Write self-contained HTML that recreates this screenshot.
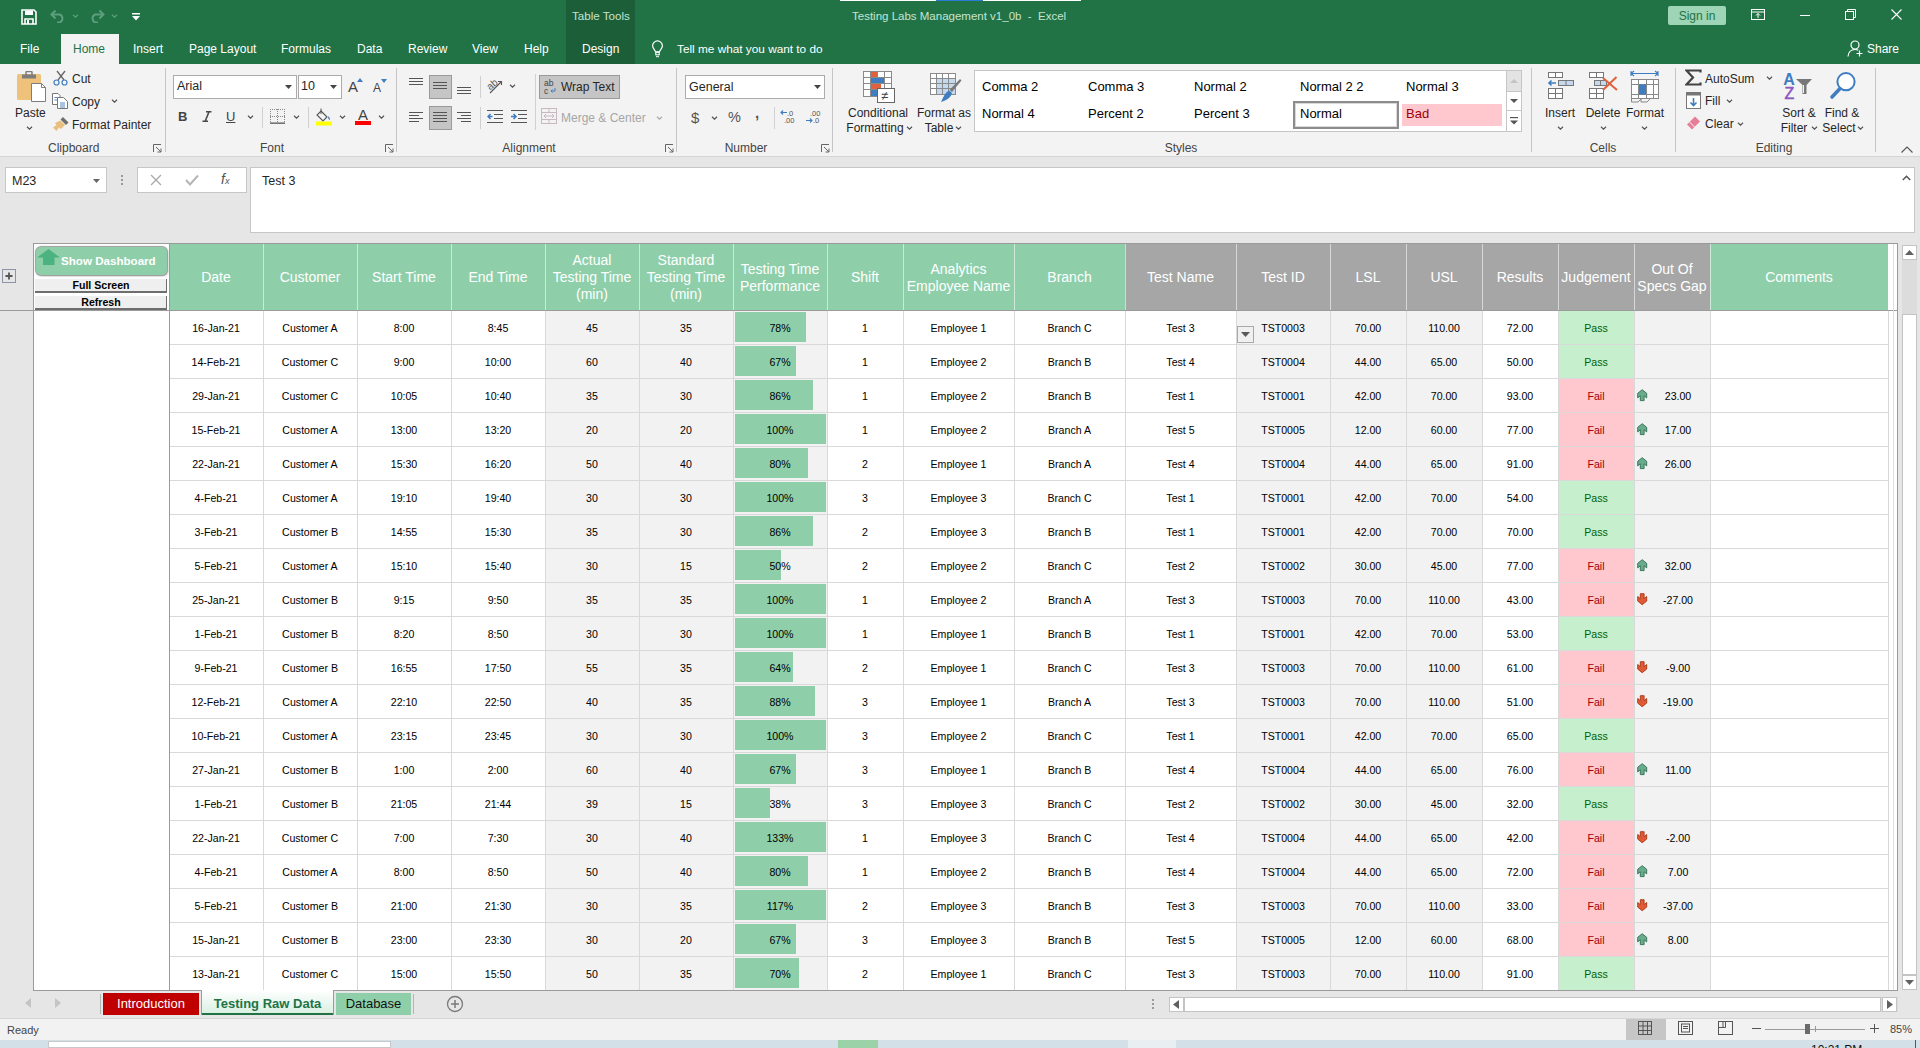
<!DOCTYPE html><html><head><meta charset="utf-8"><style>
html,body{margin:0;padding:0;width:1920px;height:1048px;overflow:hidden;background:#e6e6e6}
body{position:relative;font-family:"Liberation Sans",sans-serif}
div{position:absolute;box-sizing:border-box}
.t{white-space:nowrap}
</style></head><body>
<div style="left:0px;top:0px;width:1920px;height:64px;background:#217346"></div>
<div style="left:566px;top:0px;width:69px;height:64px;background:#1b5e38"></div>
<div style="left:840px;top:0px;width:241px;height:1px;background:#ffffff"></div>
<div style="left:936px;top:0px;width:47px;height:1px;background:#2b7bd6"></div>
<div class="t" style="left:572px;top:8.0px;height:16px;line-height:16px;font-size:11.6px;color:#c6e3d1;text-align:left;font-weight:normal;">Table Tools</div>
<div class="t" style="left:852px;top:8.0px;height:16px;line-height:16px;font-size:11.5px;color:#c6e3d1;text-align:left;font-weight:normal;">Testing Labs Management v1_0b&nbsp; -&nbsp; Excel</div>
<div style="left:61px;top:34px;width:58px;height:30px;background:#f3f3f3"></div>
<div class="t" style="left:20px;top:41.0px;height:16px;line-height:16px;font-size:12px;color:#ffffff;text-align:left;font-weight:normal;">File</div>
<div class="t" style="left:73px;top:41.0px;height:16px;line-height:16px;font-size:12px;color:#217346;text-align:left;font-weight:normal;">Home</div>
<div class="t" style="left:133px;top:41.0px;height:16px;line-height:16px;font-size:12px;color:#ffffff;text-align:left;font-weight:normal;">Insert</div>
<div class="t" style="left:189px;top:41.0px;height:16px;line-height:16px;font-size:12px;color:#ffffff;text-align:left;font-weight:normal;">Page Layout</div>
<div class="t" style="left:281px;top:41.0px;height:16px;line-height:16px;font-size:12px;color:#ffffff;text-align:left;font-weight:normal;">Formulas</div>
<div class="t" style="left:357px;top:41.0px;height:16px;line-height:16px;font-size:12px;color:#ffffff;text-align:left;font-weight:normal;">Data</div>
<div class="t" style="left:408px;top:41.0px;height:16px;line-height:16px;font-size:12px;color:#ffffff;text-align:left;font-weight:normal;">Review</div>
<div class="t" style="left:472px;top:41.0px;height:16px;line-height:16px;font-size:12px;color:#ffffff;text-align:left;font-weight:normal;">View</div>
<div class="t" style="left:524px;top:41.0px;height:16px;line-height:16px;font-size:12px;color:#ffffff;text-align:left;font-weight:normal;">Help</div>
<div class="t" style="left:582px;top:41.0px;height:16px;line-height:16px;font-size:12px;color:#ffffff;text-align:left;font-weight:normal;">Design</div>
<div class="t" style="left:677px;top:41.0px;height:16px;line-height:16px;font-size:11.8px;color:#ffffff;text-align:left;font-weight:normal;">Tell me what you want to do</div>
<div style="left:1668px;top:6px;width:58px;height:19px;background:#9fd5b7;border-radius:2px"></div>
<div class="t" style="left:1668px;top:8.0px;width:58px;height:16px;line-height:16px;font-size:12px;color:#217346;text-align:center;font-weight:normal;">Sign in</div>
<div style="left:0px;top:64px;width:1920px;height:92px;background:#f3f3f3"></div>
<div style="left:0px;top:156px;width:1920px;height:1px;background:#d5d5d5"></div>
<div style="left:0px;top:157px;width:1920px;height:86px;background:#e6e6e6"></div>
<div style="left:5px;top:167px;width:102px;height:26px;background:#fff;border:1px solid #c6c6c6;box-sizing:border-box"></div>
<div class="t" style="left:12px;top:172.5px;height:17px;line-height:17px;font-size:12.5px;color:#262626;text-align:left;font-weight:normal;">M23</div>
<div style="left:137px;top:167px;width:110px;height:26px;background:#fff;border:1px solid #c6c6c6;box-sizing:border-box"></div>
<div style="left:250px;top:167px;width:1665px;height:66px;background:#fff;border:1px solid #c6c6c6;box-sizing:border-box"></div>
<div class="t" style="left:262px;top:172.5px;height:17px;line-height:17px;font-size:12.5px;color:#262626;text-align:left;font-weight:normal;">Test 3</div>
<div style="left:33px;top:243px;width:1865px;height:748px;background:#fff"></div>
<div style="left:169px;top:244px;width:94px;height:66px;background:#8ecfaa"></div>
<div style="left:263px;top:244px;width:94px;height:66px;background:#8ecfaa"></div>
<div style="left:357px;top:244px;width:94px;height:66px;background:#8ecfaa"></div>
<div style="left:451px;top:244px;width:94px;height:66px;background:#8ecfaa"></div>
<div style="left:545px;top:244px;width:94px;height:66px;background:#8ecfaa"></div>
<div style="left:639px;top:244px;width:94px;height:66px;background:#8ecfaa"></div>
<div style="left:733px;top:244px;width:94px;height:66px;background:#8ecfaa"></div>
<div style="left:827px;top:244px;width:76px;height:66px;background:#8ecfaa"></div>
<div style="left:903px;top:244px;width:111px;height:66px;background:#8ecfaa"></div>
<div style="left:1014px;top:244px;width:111px;height:66px;background:#8ecfaa"></div>
<div style="left:1125px;top:244px;width:111px;height:66px;background:#a6a6a6"></div>
<div style="left:1236px;top:244px;width:94px;height:66px;background:#a6a6a6"></div>
<div style="left:1330px;top:244px;width:76px;height:66px;background:#a6a6a6"></div>
<div style="left:1406px;top:244px;width:76px;height:66px;background:#a6a6a6"></div>
<div style="left:1482px;top:244px;width:76px;height:66px;background:#a6a6a6"></div>
<div style="left:1558px;top:244px;width:76px;height:66px;background:#a6a6a6"></div>
<div style="left:1634px;top:244px;width:76px;height:66px;background:#a6a6a6"></div>
<div style="left:1710px;top:244px;width:178px;height:66px;background:#8ecfaa"></div>
<div style="left:263px;top:244px;width:1px;height:66px;background:rgba(255,255,255,0.55)"></div>
<div style="left:357px;top:244px;width:1px;height:66px;background:rgba(255,255,255,0.55)"></div>
<div style="left:451px;top:244px;width:1px;height:66px;background:rgba(255,255,255,0.55)"></div>
<div style="left:545px;top:244px;width:1px;height:66px;background:rgba(255,255,255,0.55)"></div>
<div style="left:639px;top:244px;width:1px;height:66px;background:rgba(255,255,255,0.55)"></div>
<div style="left:733px;top:244px;width:1px;height:66px;background:rgba(255,255,255,0.55)"></div>
<div style="left:827px;top:244px;width:1px;height:66px;background:rgba(255,255,255,0.55)"></div>
<div style="left:903px;top:244px;width:1px;height:66px;background:rgba(255,255,255,0.55)"></div>
<div style="left:1014px;top:244px;width:1px;height:66px;background:rgba(255,255,255,0.55)"></div>
<div style="left:1125px;top:244px;width:1px;height:66px;background:rgba(255,255,255,0.55)"></div>
<div style="left:1236px;top:244px;width:1px;height:66px;background:rgba(255,255,255,0.55)"></div>
<div style="left:1330px;top:244px;width:1px;height:66px;background:rgba(255,255,255,0.55)"></div>
<div style="left:1406px;top:244px;width:1px;height:66px;background:rgba(255,255,255,0.55)"></div>
<div style="left:1482px;top:244px;width:1px;height:66px;background:rgba(255,255,255,0.55)"></div>
<div style="left:1558px;top:244px;width:1px;height:66px;background:rgba(255,255,255,0.55)"></div>
<div style="left:1634px;top:244px;width:1px;height:66px;background:rgba(255,255,255,0.55)"></div>
<div style="left:1710px;top:244px;width:1px;height:66px;background:rgba(255,255,255,0.55)"></div>
<div class="t" style="left:169px;top:267.0px;width:94px;height:20px;line-height:20px;font-size:14px;color:#ffffff;text-align:center;font-weight:normal;">Date</div>
<div class="t" style="left:263px;top:267.0px;width:94px;height:20px;line-height:20px;font-size:14px;color:#ffffff;text-align:center;font-weight:normal;">Customer</div>
<div class="t" style="left:357px;top:267.0px;width:94px;height:20px;line-height:20px;font-size:14px;color:#ffffff;text-align:center;font-weight:normal;">Start Time</div>
<div class="t" style="left:451px;top:267.0px;width:94px;height:20px;line-height:20px;font-size:14px;color:#ffffff;text-align:center;font-weight:normal;">End Time</div>
<div class="t" style="left:545px;top:268.5px;width:94px;height:17px;line-height:17px;font-size:14px;color:#ffffff;text-align:center;font-weight:normal;height:51px;top:251.5px">Actual<br>Testing Time<br>(min)</div>
<div class="t" style="left:639px;top:268.5px;width:94px;height:17px;line-height:17px;font-size:14px;color:#ffffff;text-align:center;font-weight:normal;height:51px;top:251.5px">Standard<br>Testing Time<br>(min)</div>
<div class="t" style="left:733px;top:268.5px;width:94px;height:17px;line-height:17px;font-size:14px;color:#ffffff;text-align:center;font-weight:normal;height:34px;top:260.8px">Testing Time<br>Performance</div>
<div class="t" style="left:827px;top:267.0px;width:76px;height:20px;line-height:20px;font-size:14px;color:#ffffff;text-align:center;font-weight:normal;">Shift</div>
<div class="t" style="left:903px;top:268.5px;width:111px;height:17px;line-height:17px;font-size:14px;color:#ffffff;text-align:center;font-weight:normal;height:34px;top:260.8px">Analytics<br>Employee Name</div>
<div class="t" style="left:1014px;top:267.0px;width:111px;height:20px;line-height:20px;font-size:14px;color:#ffffff;text-align:center;font-weight:normal;">Branch</div>
<div class="t" style="left:1125px;top:267.0px;width:111px;height:20px;line-height:20px;font-size:14px;color:#ffffff;text-align:center;font-weight:normal;">Test Name</div>
<div class="t" style="left:1236px;top:267.0px;width:94px;height:20px;line-height:20px;font-size:14px;color:#ffffff;text-align:center;font-weight:normal;">Test ID</div>
<div class="t" style="left:1330px;top:267.0px;width:76px;height:20px;line-height:20px;font-size:14px;color:#ffffff;text-align:center;font-weight:normal;">LSL</div>
<div class="t" style="left:1406px;top:267.0px;width:76px;height:20px;line-height:20px;font-size:14px;color:#ffffff;text-align:center;font-weight:normal;">USL</div>
<div class="t" style="left:1482px;top:267.0px;width:76px;height:20px;line-height:20px;font-size:14px;color:#ffffff;text-align:center;font-weight:normal;">Results</div>
<div class="t" style="left:1558px;top:267.0px;width:76px;height:20px;line-height:20px;font-size:14px;color:#ffffff;text-align:center;font-weight:normal;">Judgement</div>
<div class="t" style="left:1634px;top:268.5px;width:76px;height:17px;line-height:17px;font-size:14px;color:#ffffff;text-align:center;font-weight:normal;height:34px;top:260.8px">Out Of<br>Specs Gap</div>
<div class="t" style="left:1710px;top:267.0px;width:178px;height:20px;line-height:20px;font-size:14px;color:#ffffff;text-align:center;font-weight:normal;">Comments</div>
<div style="left:1634px;top:311px;width:76px;height:680px;background:#f2f2f2"></div>
<div style="left:545px;top:311px;width:94px;height:680px;background:#f2f2f2"></div>
<div style="left:639px;top:311px;width:94px;height:680px;background:#f2f2f2"></div>
<div style="left:733px;top:311px;width:94px;height:680px;background:#f2f2f2"></div>
<div style="left:1236px;top:311px;width:94px;height:680px;background:#f2f2f2"></div>
<div style="left:1330px;top:311px;width:76px;height:680px;background:#f2f2f2"></div>
<div style="left:1406px;top:311px;width:76px;height:680px;background:#f2f2f2"></div>
<div style="left:1559px;top:311px;width:75px;height:33px;background:#c6efce"></div>
<div style="left:735px;top:312px;width:71px;height:30px;background:#8ecfaa;top:312px"></div>
<div class="t" style="left:169px;top:321.0px;width:94px;height:14px;line-height:14px;font-size:10.6px;color:#000000;text-align:center;font-weight:normal;">16-Jan-21</div>
<div class="t" style="left:263px;top:321.0px;width:94px;height:14px;line-height:14px;font-size:10.6px;color:#000000;text-align:center;font-weight:normal;">Customer A</div>
<div class="t" style="left:357px;top:321.0px;width:94px;height:14px;line-height:14px;font-size:10.6px;color:#000000;text-align:center;font-weight:normal;">8:00</div>
<div class="t" style="left:451px;top:321.0px;width:94px;height:14px;line-height:14px;font-size:10.6px;color:#000000;text-align:center;font-weight:normal;">8:45</div>
<div class="t" style="left:545px;top:321.0px;width:94px;height:14px;line-height:14px;font-size:10.6px;color:#000000;text-align:center;font-weight:normal;">45</div>
<div class="t" style="left:639px;top:321.0px;width:94px;height:14px;line-height:14px;font-size:10.6px;color:#000000;text-align:center;font-weight:normal;">35</div>
<div class="t" style="left:733px;top:321.0px;width:94px;height:14px;line-height:14px;font-size:10.6px;color:#000000;text-align:center;font-weight:normal;">78%</div>
<div class="t" style="left:827px;top:321.0px;width:76px;height:14px;line-height:14px;font-size:10.6px;color:#000000;text-align:center;font-weight:normal;">1</div>
<div class="t" style="left:903px;top:321.0px;width:111px;height:14px;line-height:14px;font-size:10.6px;color:#000000;text-align:center;font-weight:normal;">Employee 1</div>
<div class="t" style="left:1014px;top:321.0px;width:111px;height:14px;line-height:14px;font-size:10.6px;color:#000000;text-align:center;font-weight:normal;">Branch C</div>
<div class="t" style="left:1125px;top:321.0px;width:111px;height:14px;line-height:14px;font-size:10.6px;color:#000000;text-align:center;font-weight:normal;">Test 3</div>
<div class="t" style="left:1236px;top:321.0px;width:94px;height:14px;line-height:14px;font-size:10.6px;color:#000000;text-align:center;font-weight:normal;">TST0003</div>
<div class="t" style="left:1330px;top:321.0px;width:76px;height:14px;line-height:14px;font-size:10.6px;color:#000000;text-align:center;font-weight:normal;">70.00</div>
<div class="t" style="left:1406px;top:321.0px;width:76px;height:14px;line-height:14px;font-size:10.6px;color:#000000;text-align:center;font-weight:normal;">110.00</div>
<div class="t" style="left:1482px;top:321.0px;width:76px;height:14px;line-height:14px;font-size:10.6px;color:#000000;text-align:center;font-weight:normal;">72.00</div>
<div class="t" style="left:1558px;top:321.0px;width:76px;height:14px;line-height:14px;font-size:10.6px;color:#006100;text-align:center;font-weight:normal;">Pass</div>
<div style="left:1559px;top:345px;width:75px;height:33px;background:#c6efce"></div>
<div style="left:735px;top:312px;width:61px;height:30px;background:#8ecfaa;top:346px"></div>
<div class="t" style="left:169px;top:355.0px;width:94px;height:14px;line-height:14px;font-size:10.6px;color:#000000;text-align:center;font-weight:normal;">14-Feb-21</div>
<div class="t" style="left:263px;top:355.0px;width:94px;height:14px;line-height:14px;font-size:10.6px;color:#000000;text-align:center;font-weight:normal;">Customer C</div>
<div class="t" style="left:357px;top:355.0px;width:94px;height:14px;line-height:14px;font-size:10.6px;color:#000000;text-align:center;font-weight:normal;">9:00</div>
<div class="t" style="left:451px;top:355.0px;width:94px;height:14px;line-height:14px;font-size:10.6px;color:#000000;text-align:center;font-weight:normal;">10:00</div>
<div class="t" style="left:545px;top:355.0px;width:94px;height:14px;line-height:14px;font-size:10.6px;color:#000000;text-align:center;font-weight:normal;">60</div>
<div class="t" style="left:639px;top:355.0px;width:94px;height:14px;line-height:14px;font-size:10.6px;color:#000000;text-align:center;font-weight:normal;">40</div>
<div class="t" style="left:733px;top:355.0px;width:94px;height:14px;line-height:14px;font-size:10.6px;color:#000000;text-align:center;font-weight:normal;">67%</div>
<div class="t" style="left:827px;top:355.0px;width:76px;height:14px;line-height:14px;font-size:10.6px;color:#000000;text-align:center;font-weight:normal;">1</div>
<div class="t" style="left:903px;top:355.0px;width:111px;height:14px;line-height:14px;font-size:10.6px;color:#000000;text-align:center;font-weight:normal;">Employee 2</div>
<div class="t" style="left:1014px;top:355.0px;width:111px;height:14px;line-height:14px;font-size:10.6px;color:#000000;text-align:center;font-weight:normal;">Branch B</div>
<div class="t" style="left:1125px;top:355.0px;width:111px;height:14px;line-height:14px;font-size:10.6px;color:#000000;text-align:center;font-weight:normal;">Test 4</div>
<div class="t" style="left:1236px;top:355.0px;width:94px;height:14px;line-height:14px;font-size:10.6px;color:#000000;text-align:center;font-weight:normal;">TST0004</div>
<div class="t" style="left:1330px;top:355.0px;width:76px;height:14px;line-height:14px;font-size:10.6px;color:#000000;text-align:center;font-weight:normal;">44.00</div>
<div class="t" style="left:1406px;top:355.0px;width:76px;height:14px;line-height:14px;font-size:10.6px;color:#000000;text-align:center;font-weight:normal;">65.00</div>
<div class="t" style="left:1482px;top:355.0px;width:76px;height:14px;line-height:14px;font-size:10.6px;color:#000000;text-align:center;font-weight:normal;">50.00</div>
<div class="t" style="left:1558px;top:355.0px;width:76px;height:14px;line-height:14px;font-size:10.6px;color:#006100;text-align:center;font-weight:normal;">Pass</div>
<div style="left:1559px;top:379px;width:75px;height:33px;background:#ffc7ce"></div>
<div style="left:735px;top:312px;width:78px;height:30px;background:#8ecfaa;top:380px"></div>
<div class="t" style="left:169px;top:389.0px;width:94px;height:14px;line-height:14px;font-size:10.6px;color:#000000;text-align:center;font-weight:normal;">29-Jan-21</div>
<div class="t" style="left:263px;top:389.0px;width:94px;height:14px;line-height:14px;font-size:10.6px;color:#000000;text-align:center;font-weight:normal;">Customer C</div>
<div class="t" style="left:357px;top:389.0px;width:94px;height:14px;line-height:14px;font-size:10.6px;color:#000000;text-align:center;font-weight:normal;">10:05</div>
<div class="t" style="left:451px;top:389.0px;width:94px;height:14px;line-height:14px;font-size:10.6px;color:#000000;text-align:center;font-weight:normal;">10:40</div>
<div class="t" style="left:545px;top:389.0px;width:94px;height:14px;line-height:14px;font-size:10.6px;color:#000000;text-align:center;font-weight:normal;">35</div>
<div class="t" style="left:639px;top:389.0px;width:94px;height:14px;line-height:14px;font-size:10.6px;color:#000000;text-align:center;font-weight:normal;">30</div>
<div class="t" style="left:733px;top:389.0px;width:94px;height:14px;line-height:14px;font-size:10.6px;color:#000000;text-align:center;font-weight:normal;">86%</div>
<div class="t" style="left:827px;top:389.0px;width:76px;height:14px;line-height:14px;font-size:10.6px;color:#000000;text-align:center;font-weight:normal;">1</div>
<div class="t" style="left:903px;top:389.0px;width:111px;height:14px;line-height:14px;font-size:10.6px;color:#000000;text-align:center;font-weight:normal;">Employee 2</div>
<div class="t" style="left:1014px;top:389.0px;width:111px;height:14px;line-height:14px;font-size:10.6px;color:#000000;text-align:center;font-weight:normal;">Branch B</div>
<div class="t" style="left:1125px;top:389.0px;width:111px;height:14px;line-height:14px;font-size:10.6px;color:#000000;text-align:center;font-weight:normal;">Test 1</div>
<div class="t" style="left:1236px;top:389.0px;width:94px;height:14px;line-height:14px;font-size:10.6px;color:#000000;text-align:center;font-weight:normal;">TST0001</div>
<div class="t" style="left:1330px;top:389.0px;width:76px;height:14px;line-height:14px;font-size:10.6px;color:#000000;text-align:center;font-weight:normal;">42.00</div>
<div class="t" style="left:1406px;top:389.0px;width:76px;height:14px;line-height:14px;font-size:10.6px;color:#000000;text-align:center;font-weight:normal;">70.00</div>
<div class="t" style="left:1482px;top:389.0px;width:76px;height:14px;line-height:14px;font-size:10.6px;color:#000000;text-align:center;font-weight:normal;">93.00</div>
<div class="t" style="left:1558px;top:389.0px;width:76px;height:14px;line-height:14px;font-size:10.6px;color:#9c0006;text-align:center;font-weight:normal;">Fail</div>
<div class="t" style="left:1640px;top:389.0px;width:76px;height:14px;line-height:14px;font-size:10.6px;color:#000000;text-align:center;font-weight:normal;">23.00</div>
<svg style="position:absolute;left:1637px;top:389px;" width="11" height="13" viewBox="0 0 11 13"><path d="M5.2 0.7 L9.7 4.3 L9.7 8.9 L7.1 6.8 L7.1 11.6 L3.3 11.6 L3.3 6.8 L0.7 8.9 L0.7 4.3 Z" fill="#6aab8e" stroke="#2f6f50" stroke-width="0.9" stroke-linejoin="round"/></svg>
<div style="left:1559px;top:413px;width:75px;height:33px;background:#ffc7ce"></div>
<div style="left:735px;top:312px;width:91px;height:30px;background:#8ecfaa;top:414px"></div>
<div class="t" style="left:169px;top:423.0px;width:94px;height:14px;line-height:14px;font-size:10.6px;color:#000000;text-align:center;font-weight:normal;">15-Feb-21</div>
<div class="t" style="left:263px;top:423.0px;width:94px;height:14px;line-height:14px;font-size:10.6px;color:#000000;text-align:center;font-weight:normal;">Customer A</div>
<div class="t" style="left:357px;top:423.0px;width:94px;height:14px;line-height:14px;font-size:10.6px;color:#000000;text-align:center;font-weight:normal;">13:00</div>
<div class="t" style="left:451px;top:423.0px;width:94px;height:14px;line-height:14px;font-size:10.6px;color:#000000;text-align:center;font-weight:normal;">13:20</div>
<div class="t" style="left:545px;top:423.0px;width:94px;height:14px;line-height:14px;font-size:10.6px;color:#000000;text-align:center;font-weight:normal;">20</div>
<div class="t" style="left:639px;top:423.0px;width:94px;height:14px;line-height:14px;font-size:10.6px;color:#000000;text-align:center;font-weight:normal;">20</div>
<div class="t" style="left:733px;top:423.0px;width:94px;height:14px;line-height:14px;font-size:10.6px;color:#000000;text-align:center;font-weight:normal;">100%</div>
<div class="t" style="left:827px;top:423.0px;width:76px;height:14px;line-height:14px;font-size:10.6px;color:#000000;text-align:center;font-weight:normal;">1</div>
<div class="t" style="left:903px;top:423.0px;width:111px;height:14px;line-height:14px;font-size:10.6px;color:#000000;text-align:center;font-weight:normal;">Employee 2</div>
<div class="t" style="left:1014px;top:423.0px;width:111px;height:14px;line-height:14px;font-size:10.6px;color:#000000;text-align:center;font-weight:normal;">Branch A</div>
<div class="t" style="left:1125px;top:423.0px;width:111px;height:14px;line-height:14px;font-size:10.6px;color:#000000;text-align:center;font-weight:normal;">Test 5</div>
<div class="t" style="left:1236px;top:423.0px;width:94px;height:14px;line-height:14px;font-size:10.6px;color:#000000;text-align:center;font-weight:normal;">TST0005</div>
<div class="t" style="left:1330px;top:423.0px;width:76px;height:14px;line-height:14px;font-size:10.6px;color:#000000;text-align:center;font-weight:normal;">12.00</div>
<div class="t" style="left:1406px;top:423.0px;width:76px;height:14px;line-height:14px;font-size:10.6px;color:#000000;text-align:center;font-weight:normal;">60.00</div>
<div class="t" style="left:1482px;top:423.0px;width:76px;height:14px;line-height:14px;font-size:10.6px;color:#000000;text-align:center;font-weight:normal;">77.00</div>
<div class="t" style="left:1558px;top:423.0px;width:76px;height:14px;line-height:14px;font-size:10.6px;color:#9c0006;text-align:center;font-weight:normal;">Fail</div>
<div class="t" style="left:1640px;top:423.0px;width:76px;height:14px;line-height:14px;font-size:10.6px;color:#000000;text-align:center;font-weight:normal;">17.00</div>
<svg style="position:absolute;left:1637px;top:423px;" width="11" height="13" viewBox="0 0 11 13"><path d="M5.2 0.7 L9.7 4.3 L9.7 8.9 L7.1 6.8 L7.1 11.6 L3.3 11.6 L3.3 6.8 L0.7 8.9 L0.7 4.3 Z" fill="#6aab8e" stroke="#2f6f50" stroke-width="0.9" stroke-linejoin="round"/></svg>
<div style="left:1559px;top:447px;width:75px;height:33px;background:#ffc7ce"></div>
<div style="left:735px;top:312px;width:73px;height:30px;background:#8ecfaa;top:448px"></div>
<div class="t" style="left:169px;top:457.0px;width:94px;height:14px;line-height:14px;font-size:10.6px;color:#000000;text-align:center;font-weight:normal;">22-Jan-21</div>
<div class="t" style="left:263px;top:457.0px;width:94px;height:14px;line-height:14px;font-size:10.6px;color:#000000;text-align:center;font-weight:normal;">Customer A</div>
<div class="t" style="left:357px;top:457.0px;width:94px;height:14px;line-height:14px;font-size:10.6px;color:#000000;text-align:center;font-weight:normal;">15:30</div>
<div class="t" style="left:451px;top:457.0px;width:94px;height:14px;line-height:14px;font-size:10.6px;color:#000000;text-align:center;font-weight:normal;">16:20</div>
<div class="t" style="left:545px;top:457.0px;width:94px;height:14px;line-height:14px;font-size:10.6px;color:#000000;text-align:center;font-weight:normal;">50</div>
<div class="t" style="left:639px;top:457.0px;width:94px;height:14px;line-height:14px;font-size:10.6px;color:#000000;text-align:center;font-weight:normal;">40</div>
<div class="t" style="left:733px;top:457.0px;width:94px;height:14px;line-height:14px;font-size:10.6px;color:#000000;text-align:center;font-weight:normal;">80%</div>
<div class="t" style="left:827px;top:457.0px;width:76px;height:14px;line-height:14px;font-size:10.6px;color:#000000;text-align:center;font-weight:normal;">2</div>
<div class="t" style="left:903px;top:457.0px;width:111px;height:14px;line-height:14px;font-size:10.6px;color:#000000;text-align:center;font-weight:normal;">Employee 1</div>
<div class="t" style="left:1014px;top:457.0px;width:111px;height:14px;line-height:14px;font-size:10.6px;color:#000000;text-align:center;font-weight:normal;">Branch A</div>
<div class="t" style="left:1125px;top:457.0px;width:111px;height:14px;line-height:14px;font-size:10.6px;color:#000000;text-align:center;font-weight:normal;">Test 4</div>
<div class="t" style="left:1236px;top:457.0px;width:94px;height:14px;line-height:14px;font-size:10.6px;color:#000000;text-align:center;font-weight:normal;">TST0004</div>
<div class="t" style="left:1330px;top:457.0px;width:76px;height:14px;line-height:14px;font-size:10.6px;color:#000000;text-align:center;font-weight:normal;">44.00</div>
<div class="t" style="left:1406px;top:457.0px;width:76px;height:14px;line-height:14px;font-size:10.6px;color:#000000;text-align:center;font-weight:normal;">65.00</div>
<div class="t" style="left:1482px;top:457.0px;width:76px;height:14px;line-height:14px;font-size:10.6px;color:#000000;text-align:center;font-weight:normal;">91.00</div>
<div class="t" style="left:1558px;top:457.0px;width:76px;height:14px;line-height:14px;font-size:10.6px;color:#9c0006;text-align:center;font-weight:normal;">Fail</div>
<div class="t" style="left:1640px;top:457.0px;width:76px;height:14px;line-height:14px;font-size:10.6px;color:#000000;text-align:center;font-weight:normal;">26.00</div>
<svg style="position:absolute;left:1637px;top:457px;" width="11" height="13" viewBox="0 0 11 13"><path d="M5.2 0.7 L9.7 4.3 L9.7 8.9 L7.1 6.8 L7.1 11.6 L3.3 11.6 L3.3 6.8 L0.7 8.9 L0.7 4.3 Z" fill="#6aab8e" stroke="#2f6f50" stroke-width="0.9" stroke-linejoin="round"/></svg>
<div style="left:1559px;top:481px;width:75px;height:33px;background:#c6efce"></div>
<div style="left:735px;top:312px;width:91px;height:30px;background:#8ecfaa;top:482px"></div>
<div class="t" style="left:169px;top:491.0px;width:94px;height:14px;line-height:14px;font-size:10.6px;color:#000000;text-align:center;font-weight:normal;">4-Feb-21</div>
<div class="t" style="left:263px;top:491.0px;width:94px;height:14px;line-height:14px;font-size:10.6px;color:#000000;text-align:center;font-weight:normal;">Customer A</div>
<div class="t" style="left:357px;top:491.0px;width:94px;height:14px;line-height:14px;font-size:10.6px;color:#000000;text-align:center;font-weight:normal;">19:10</div>
<div class="t" style="left:451px;top:491.0px;width:94px;height:14px;line-height:14px;font-size:10.6px;color:#000000;text-align:center;font-weight:normal;">19:40</div>
<div class="t" style="left:545px;top:491.0px;width:94px;height:14px;line-height:14px;font-size:10.6px;color:#000000;text-align:center;font-weight:normal;">30</div>
<div class="t" style="left:639px;top:491.0px;width:94px;height:14px;line-height:14px;font-size:10.6px;color:#000000;text-align:center;font-weight:normal;">30</div>
<div class="t" style="left:733px;top:491.0px;width:94px;height:14px;line-height:14px;font-size:10.6px;color:#000000;text-align:center;font-weight:normal;">100%</div>
<div class="t" style="left:827px;top:491.0px;width:76px;height:14px;line-height:14px;font-size:10.6px;color:#000000;text-align:center;font-weight:normal;">3</div>
<div class="t" style="left:903px;top:491.0px;width:111px;height:14px;line-height:14px;font-size:10.6px;color:#000000;text-align:center;font-weight:normal;">Employee 3</div>
<div class="t" style="left:1014px;top:491.0px;width:111px;height:14px;line-height:14px;font-size:10.6px;color:#000000;text-align:center;font-weight:normal;">Branch C</div>
<div class="t" style="left:1125px;top:491.0px;width:111px;height:14px;line-height:14px;font-size:10.6px;color:#000000;text-align:center;font-weight:normal;">Test 1</div>
<div class="t" style="left:1236px;top:491.0px;width:94px;height:14px;line-height:14px;font-size:10.6px;color:#000000;text-align:center;font-weight:normal;">TST0001</div>
<div class="t" style="left:1330px;top:491.0px;width:76px;height:14px;line-height:14px;font-size:10.6px;color:#000000;text-align:center;font-weight:normal;">42.00</div>
<div class="t" style="left:1406px;top:491.0px;width:76px;height:14px;line-height:14px;font-size:10.6px;color:#000000;text-align:center;font-weight:normal;">70.00</div>
<div class="t" style="left:1482px;top:491.0px;width:76px;height:14px;line-height:14px;font-size:10.6px;color:#000000;text-align:center;font-weight:normal;">54.00</div>
<div class="t" style="left:1558px;top:491.0px;width:76px;height:14px;line-height:14px;font-size:10.6px;color:#006100;text-align:center;font-weight:normal;">Pass</div>
<div style="left:1559px;top:515px;width:75px;height:33px;background:#c6efce"></div>
<div style="left:735px;top:312px;width:78px;height:30px;background:#8ecfaa;top:516px"></div>
<div class="t" style="left:169px;top:525.0px;width:94px;height:14px;line-height:14px;font-size:10.6px;color:#000000;text-align:center;font-weight:normal;">3-Feb-21</div>
<div class="t" style="left:263px;top:525.0px;width:94px;height:14px;line-height:14px;font-size:10.6px;color:#000000;text-align:center;font-weight:normal;">Customer B</div>
<div class="t" style="left:357px;top:525.0px;width:94px;height:14px;line-height:14px;font-size:10.6px;color:#000000;text-align:center;font-weight:normal;">14:55</div>
<div class="t" style="left:451px;top:525.0px;width:94px;height:14px;line-height:14px;font-size:10.6px;color:#000000;text-align:center;font-weight:normal;">15:30</div>
<div class="t" style="left:545px;top:525.0px;width:94px;height:14px;line-height:14px;font-size:10.6px;color:#000000;text-align:center;font-weight:normal;">35</div>
<div class="t" style="left:639px;top:525.0px;width:94px;height:14px;line-height:14px;font-size:10.6px;color:#000000;text-align:center;font-weight:normal;">30</div>
<div class="t" style="left:733px;top:525.0px;width:94px;height:14px;line-height:14px;font-size:10.6px;color:#000000;text-align:center;font-weight:normal;">86%</div>
<div class="t" style="left:827px;top:525.0px;width:76px;height:14px;line-height:14px;font-size:10.6px;color:#000000;text-align:center;font-weight:normal;">2</div>
<div class="t" style="left:903px;top:525.0px;width:111px;height:14px;line-height:14px;font-size:10.6px;color:#000000;text-align:center;font-weight:normal;">Employee 3</div>
<div class="t" style="left:1014px;top:525.0px;width:111px;height:14px;line-height:14px;font-size:10.6px;color:#000000;text-align:center;font-weight:normal;">Branch B</div>
<div class="t" style="left:1125px;top:525.0px;width:111px;height:14px;line-height:14px;font-size:10.6px;color:#000000;text-align:center;font-weight:normal;">Test 1</div>
<div class="t" style="left:1236px;top:525.0px;width:94px;height:14px;line-height:14px;font-size:10.6px;color:#000000;text-align:center;font-weight:normal;">TST0001</div>
<div class="t" style="left:1330px;top:525.0px;width:76px;height:14px;line-height:14px;font-size:10.6px;color:#000000;text-align:center;font-weight:normal;">42.00</div>
<div class="t" style="left:1406px;top:525.0px;width:76px;height:14px;line-height:14px;font-size:10.6px;color:#000000;text-align:center;font-weight:normal;">70.00</div>
<div class="t" style="left:1482px;top:525.0px;width:76px;height:14px;line-height:14px;font-size:10.6px;color:#000000;text-align:center;font-weight:normal;">70.00</div>
<div class="t" style="left:1558px;top:525.0px;width:76px;height:14px;line-height:14px;font-size:10.6px;color:#006100;text-align:center;font-weight:normal;">Pass</div>
<div style="left:1559px;top:549px;width:75px;height:33px;background:#ffc7ce"></div>
<div style="left:735px;top:312px;width:46px;height:30px;background:#8ecfaa;top:550px"></div>
<div class="t" style="left:169px;top:559.0px;width:94px;height:14px;line-height:14px;font-size:10.6px;color:#000000;text-align:center;font-weight:normal;">5-Feb-21</div>
<div class="t" style="left:263px;top:559.0px;width:94px;height:14px;line-height:14px;font-size:10.6px;color:#000000;text-align:center;font-weight:normal;">Customer A</div>
<div class="t" style="left:357px;top:559.0px;width:94px;height:14px;line-height:14px;font-size:10.6px;color:#000000;text-align:center;font-weight:normal;">15:10</div>
<div class="t" style="left:451px;top:559.0px;width:94px;height:14px;line-height:14px;font-size:10.6px;color:#000000;text-align:center;font-weight:normal;">15:40</div>
<div class="t" style="left:545px;top:559.0px;width:94px;height:14px;line-height:14px;font-size:10.6px;color:#000000;text-align:center;font-weight:normal;">30</div>
<div class="t" style="left:639px;top:559.0px;width:94px;height:14px;line-height:14px;font-size:10.6px;color:#000000;text-align:center;font-weight:normal;">15</div>
<div class="t" style="left:733px;top:559.0px;width:94px;height:14px;line-height:14px;font-size:10.6px;color:#000000;text-align:center;font-weight:normal;">50%</div>
<div class="t" style="left:827px;top:559.0px;width:76px;height:14px;line-height:14px;font-size:10.6px;color:#000000;text-align:center;font-weight:normal;">2</div>
<div class="t" style="left:903px;top:559.0px;width:111px;height:14px;line-height:14px;font-size:10.6px;color:#000000;text-align:center;font-weight:normal;">Employee 2</div>
<div class="t" style="left:1014px;top:559.0px;width:111px;height:14px;line-height:14px;font-size:10.6px;color:#000000;text-align:center;font-weight:normal;">Branch C</div>
<div class="t" style="left:1125px;top:559.0px;width:111px;height:14px;line-height:14px;font-size:10.6px;color:#000000;text-align:center;font-weight:normal;">Test 2</div>
<div class="t" style="left:1236px;top:559.0px;width:94px;height:14px;line-height:14px;font-size:10.6px;color:#000000;text-align:center;font-weight:normal;">TST0002</div>
<div class="t" style="left:1330px;top:559.0px;width:76px;height:14px;line-height:14px;font-size:10.6px;color:#000000;text-align:center;font-weight:normal;">30.00</div>
<div class="t" style="left:1406px;top:559.0px;width:76px;height:14px;line-height:14px;font-size:10.6px;color:#000000;text-align:center;font-weight:normal;">45.00</div>
<div class="t" style="left:1482px;top:559.0px;width:76px;height:14px;line-height:14px;font-size:10.6px;color:#000000;text-align:center;font-weight:normal;">77.00</div>
<div class="t" style="left:1558px;top:559.0px;width:76px;height:14px;line-height:14px;font-size:10.6px;color:#9c0006;text-align:center;font-weight:normal;">Fail</div>
<div class="t" style="left:1640px;top:559.0px;width:76px;height:14px;line-height:14px;font-size:10.6px;color:#000000;text-align:center;font-weight:normal;">32.00</div>
<svg style="position:absolute;left:1637px;top:559px;" width="11" height="13" viewBox="0 0 11 13"><path d="M5.2 0.7 L9.7 4.3 L9.7 8.9 L7.1 6.8 L7.1 11.6 L3.3 11.6 L3.3 6.8 L0.7 8.9 L0.7 4.3 Z" fill="#6aab8e" stroke="#2f6f50" stroke-width="0.9" stroke-linejoin="round"/></svg>
<div style="left:1559px;top:583px;width:75px;height:33px;background:#ffc7ce"></div>
<div style="left:735px;top:312px;width:91px;height:30px;background:#8ecfaa;top:584px"></div>
<div class="t" style="left:169px;top:593.0px;width:94px;height:14px;line-height:14px;font-size:10.6px;color:#000000;text-align:center;font-weight:normal;">25-Jan-21</div>
<div class="t" style="left:263px;top:593.0px;width:94px;height:14px;line-height:14px;font-size:10.6px;color:#000000;text-align:center;font-weight:normal;">Customer B</div>
<div class="t" style="left:357px;top:593.0px;width:94px;height:14px;line-height:14px;font-size:10.6px;color:#000000;text-align:center;font-weight:normal;">9:15</div>
<div class="t" style="left:451px;top:593.0px;width:94px;height:14px;line-height:14px;font-size:10.6px;color:#000000;text-align:center;font-weight:normal;">9:50</div>
<div class="t" style="left:545px;top:593.0px;width:94px;height:14px;line-height:14px;font-size:10.6px;color:#000000;text-align:center;font-weight:normal;">35</div>
<div class="t" style="left:639px;top:593.0px;width:94px;height:14px;line-height:14px;font-size:10.6px;color:#000000;text-align:center;font-weight:normal;">35</div>
<div class="t" style="left:733px;top:593.0px;width:94px;height:14px;line-height:14px;font-size:10.6px;color:#000000;text-align:center;font-weight:normal;">100%</div>
<div class="t" style="left:827px;top:593.0px;width:76px;height:14px;line-height:14px;font-size:10.6px;color:#000000;text-align:center;font-weight:normal;">1</div>
<div class="t" style="left:903px;top:593.0px;width:111px;height:14px;line-height:14px;font-size:10.6px;color:#000000;text-align:center;font-weight:normal;">Employee 2</div>
<div class="t" style="left:1014px;top:593.0px;width:111px;height:14px;line-height:14px;font-size:10.6px;color:#000000;text-align:center;font-weight:normal;">Branch A</div>
<div class="t" style="left:1125px;top:593.0px;width:111px;height:14px;line-height:14px;font-size:10.6px;color:#000000;text-align:center;font-weight:normal;">Test 3</div>
<div class="t" style="left:1236px;top:593.0px;width:94px;height:14px;line-height:14px;font-size:10.6px;color:#000000;text-align:center;font-weight:normal;">TST0003</div>
<div class="t" style="left:1330px;top:593.0px;width:76px;height:14px;line-height:14px;font-size:10.6px;color:#000000;text-align:center;font-weight:normal;">70.00</div>
<div class="t" style="left:1406px;top:593.0px;width:76px;height:14px;line-height:14px;font-size:10.6px;color:#000000;text-align:center;font-weight:normal;">110.00</div>
<div class="t" style="left:1482px;top:593.0px;width:76px;height:14px;line-height:14px;font-size:10.6px;color:#000000;text-align:center;font-weight:normal;">43.00</div>
<div class="t" style="left:1558px;top:593.0px;width:76px;height:14px;line-height:14px;font-size:10.6px;color:#9c0006;text-align:center;font-weight:normal;">Fail</div>
<div class="t" style="left:1640px;top:593.0px;width:76px;height:14px;line-height:14px;font-size:10.6px;color:#000000;text-align:center;font-weight:normal;">-27.00</div>
<svg style="position:absolute;left:1637px;top:593px;" width="11" height="13" viewBox="0 0 11 13"><path d="M3.3 0.7 L7.1 0.7 L7.1 5.6 L9.7 3.5 L9.7 8.1 L5.2 11.7 L0.7 8.1 L0.7 3.5 L3.3 5.6 Z" fill="#e05a35" stroke="#a83714" stroke-width="0.9" stroke-linejoin="round"/></svg>
<div style="left:1559px;top:617px;width:75px;height:33px;background:#c6efce"></div>
<div style="left:735px;top:312px;width:91px;height:30px;background:#8ecfaa;top:618px"></div>
<div class="t" style="left:169px;top:627.0px;width:94px;height:14px;line-height:14px;font-size:10.6px;color:#000000;text-align:center;font-weight:normal;">1-Feb-21</div>
<div class="t" style="left:263px;top:627.0px;width:94px;height:14px;line-height:14px;font-size:10.6px;color:#000000;text-align:center;font-weight:normal;">Customer B</div>
<div class="t" style="left:357px;top:627.0px;width:94px;height:14px;line-height:14px;font-size:10.6px;color:#000000;text-align:center;font-weight:normal;">8:20</div>
<div class="t" style="left:451px;top:627.0px;width:94px;height:14px;line-height:14px;font-size:10.6px;color:#000000;text-align:center;font-weight:normal;">8:50</div>
<div class="t" style="left:545px;top:627.0px;width:94px;height:14px;line-height:14px;font-size:10.6px;color:#000000;text-align:center;font-weight:normal;">30</div>
<div class="t" style="left:639px;top:627.0px;width:94px;height:14px;line-height:14px;font-size:10.6px;color:#000000;text-align:center;font-weight:normal;">30</div>
<div class="t" style="left:733px;top:627.0px;width:94px;height:14px;line-height:14px;font-size:10.6px;color:#000000;text-align:center;font-weight:normal;">100%</div>
<div class="t" style="left:827px;top:627.0px;width:76px;height:14px;line-height:14px;font-size:10.6px;color:#000000;text-align:center;font-weight:normal;">1</div>
<div class="t" style="left:903px;top:627.0px;width:111px;height:14px;line-height:14px;font-size:10.6px;color:#000000;text-align:center;font-weight:normal;">Employee 1</div>
<div class="t" style="left:1014px;top:627.0px;width:111px;height:14px;line-height:14px;font-size:10.6px;color:#000000;text-align:center;font-weight:normal;">Branch B</div>
<div class="t" style="left:1125px;top:627.0px;width:111px;height:14px;line-height:14px;font-size:10.6px;color:#000000;text-align:center;font-weight:normal;">Test 1</div>
<div class="t" style="left:1236px;top:627.0px;width:94px;height:14px;line-height:14px;font-size:10.6px;color:#000000;text-align:center;font-weight:normal;">TST0001</div>
<div class="t" style="left:1330px;top:627.0px;width:76px;height:14px;line-height:14px;font-size:10.6px;color:#000000;text-align:center;font-weight:normal;">42.00</div>
<div class="t" style="left:1406px;top:627.0px;width:76px;height:14px;line-height:14px;font-size:10.6px;color:#000000;text-align:center;font-weight:normal;">70.00</div>
<div class="t" style="left:1482px;top:627.0px;width:76px;height:14px;line-height:14px;font-size:10.6px;color:#000000;text-align:center;font-weight:normal;">53.00</div>
<div class="t" style="left:1558px;top:627.0px;width:76px;height:14px;line-height:14px;font-size:10.6px;color:#006100;text-align:center;font-weight:normal;">Pass</div>
<div style="left:1559px;top:651px;width:75px;height:33px;background:#ffc7ce"></div>
<div style="left:735px;top:312px;width:58px;height:30px;background:#8ecfaa;top:652px"></div>
<div class="t" style="left:169px;top:661.0px;width:94px;height:14px;line-height:14px;font-size:10.6px;color:#000000;text-align:center;font-weight:normal;">9-Feb-21</div>
<div class="t" style="left:263px;top:661.0px;width:94px;height:14px;line-height:14px;font-size:10.6px;color:#000000;text-align:center;font-weight:normal;">Customer B</div>
<div class="t" style="left:357px;top:661.0px;width:94px;height:14px;line-height:14px;font-size:10.6px;color:#000000;text-align:center;font-weight:normal;">16:55</div>
<div class="t" style="left:451px;top:661.0px;width:94px;height:14px;line-height:14px;font-size:10.6px;color:#000000;text-align:center;font-weight:normal;">17:50</div>
<div class="t" style="left:545px;top:661.0px;width:94px;height:14px;line-height:14px;font-size:10.6px;color:#000000;text-align:center;font-weight:normal;">55</div>
<div class="t" style="left:639px;top:661.0px;width:94px;height:14px;line-height:14px;font-size:10.6px;color:#000000;text-align:center;font-weight:normal;">35</div>
<div class="t" style="left:733px;top:661.0px;width:94px;height:14px;line-height:14px;font-size:10.6px;color:#000000;text-align:center;font-weight:normal;">64%</div>
<div class="t" style="left:827px;top:661.0px;width:76px;height:14px;line-height:14px;font-size:10.6px;color:#000000;text-align:center;font-weight:normal;">2</div>
<div class="t" style="left:903px;top:661.0px;width:111px;height:14px;line-height:14px;font-size:10.6px;color:#000000;text-align:center;font-weight:normal;">Employee 1</div>
<div class="t" style="left:1014px;top:661.0px;width:111px;height:14px;line-height:14px;font-size:10.6px;color:#000000;text-align:center;font-weight:normal;">Branch C</div>
<div class="t" style="left:1125px;top:661.0px;width:111px;height:14px;line-height:14px;font-size:10.6px;color:#000000;text-align:center;font-weight:normal;">Test 3</div>
<div class="t" style="left:1236px;top:661.0px;width:94px;height:14px;line-height:14px;font-size:10.6px;color:#000000;text-align:center;font-weight:normal;">TST0003</div>
<div class="t" style="left:1330px;top:661.0px;width:76px;height:14px;line-height:14px;font-size:10.6px;color:#000000;text-align:center;font-weight:normal;">70.00</div>
<div class="t" style="left:1406px;top:661.0px;width:76px;height:14px;line-height:14px;font-size:10.6px;color:#000000;text-align:center;font-weight:normal;">110.00</div>
<div class="t" style="left:1482px;top:661.0px;width:76px;height:14px;line-height:14px;font-size:10.6px;color:#000000;text-align:center;font-weight:normal;">61.00</div>
<div class="t" style="left:1558px;top:661.0px;width:76px;height:14px;line-height:14px;font-size:10.6px;color:#9c0006;text-align:center;font-weight:normal;">Fail</div>
<div class="t" style="left:1640px;top:661.0px;width:76px;height:14px;line-height:14px;font-size:10.6px;color:#000000;text-align:center;font-weight:normal;">-9.00</div>
<svg style="position:absolute;left:1637px;top:661px;" width="11" height="13" viewBox="0 0 11 13"><path d="M3.3 0.7 L7.1 0.7 L7.1 5.6 L9.7 3.5 L9.7 8.1 L5.2 11.7 L0.7 8.1 L0.7 3.5 L3.3 5.6 Z" fill="#e05a35" stroke="#a83714" stroke-width="0.9" stroke-linejoin="round"/></svg>
<div style="left:1559px;top:685px;width:75px;height:33px;background:#ffc7ce"></div>
<div style="left:735px;top:312px;width:80px;height:30px;background:#8ecfaa;top:686px"></div>
<div class="t" style="left:169px;top:695.0px;width:94px;height:14px;line-height:14px;font-size:10.6px;color:#000000;text-align:center;font-weight:normal;">12-Feb-21</div>
<div class="t" style="left:263px;top:695.0px;width:94px;height:14px;line-height:14px;font-size:10.6px;color:#000000;text-align:center;font-weight:normal;">Customer A</div>
<div class="t" style="left:357px;top:695.0px;width:94px;height:14px;line-height:14px;font-size:10.6px;color:#000000;text-align:center;font-weight:normal;">22:10</div>
<div class="t" style="left:451px;top:695.0px;width:94px;height:14px;line-height:14px;font-size:10.6px;color:#000000;text-align:center;font-weight:normal;">22:50</div>
<div class="t" style="left:545px;top:695.0px;width:94px;height:14px;line-height:14px;font-size:10.6px;color:#000000;text-align:center;font-weight:normal;">40</div>
<div class="t" style="left:639px;top:695.0px;width:94px;height:14px;line-height:14px;font-size:10.6px;color:#000000;text-align:center;font-weight:normal;">35</div>
<div class="t" style="left:733px;top:695.0px;width:94px;height:14px;line-height:14px;font-size:10.6px;color:#000000;text-align:center;font-weight:normal;">88%</div>
<div class="t" style="left:827px;top:695.0px;width:76px;height:14px;line-height:14px;font-size:10.6px;color:#000000;text-align:center;font-weight:normal;">3</div>
<div class="t" style="left:903px;top:695.0px;width:111px;height:14px;line-height:14px;font-size:10.6px;color:#000000;text-align:center;font-weight:normal;">Employee 1</div>
<div class="t" style="left:1014px;top:695.0px;width:111px;height:14px;line-height:14px;font-size:10.6px;color:#000000;text-align:center;font-weight:normal;">Branch A</div>
<div class="t" style="left:1125px;top:695.0px;width:111px;height:14px;line-height:14px;font-size:10.6px;color:#000000;text-align:center;font-weight:normal;">Test 3</div>
<div class="t" style="left:1236px;top:695.0px;width:94px;height:14px;line-height:14px;font-size:10.6px;color:#000000;text-align:center;font-weight:normal;">TST0003</div>
<div class="t" style="left:1330px;top:695.0px;width:76px;height:14px;line-height:14px;font-size:10.6px;color:#000000;text-align:center;font-weight:normal;">70.00</div>
<div class="t" style="left:1406px;top:695.0px;width:76px;height:14px;line-height:14px;font-size:10.6px;color:#000000;text-align:center;font-weight:normal;">110.00</div>
<div class="t" style="left:1482px;top:695.0px;width:76px;height:14px;line-height:14px;font-size:10.6px;color:#000000;text-align:center;font-weight:normal;">51.00</div>
<div class="t" style="left:1558px;top:695.0px;width:76px;height:14px;line-height:14px;font-size:10.6px;color:#9c0006;text-align:center;font-weight:normal;">Fail</div>
<div class="t" style="left:1640px;top:695.0px;width:76px;height:14px;line-height:14px;font-size:10.6px;color:#000000;text-align:center;font-weight:normal;">-19.00</div>
<svg style="position:absolute;left:1637px;top:695px;" width="11" height="13" viewBox="0 0 11 13"><path d="M3.3 0.7 L7.1 0.7 L7.1 5.6 L9.7 3.5 L9.7 8.1 L5.2 11.7 L0.7 8.1 L0.7 3.5 L3.3 5.6 Z" fill="#e05a35" stroke="#a83714" stroke-width="0.9" stroke-linejoin="round"/></svg>
<div style="left:1559px;top:719px;width:75px;height:33px;background:#c6efce"></div>
<div style="left:735px;top:312px;width:91px;height:30px;background:#8ecfaa;top:720px"></div>
<div class="t" style="left:169px;top:729.0px;width:94px;height:14px;line-height:14px;font-size:10.6px;color:#000000;text-align:center;font-weight:normal;">10-Feb-21</div>
<div class="t" style="left:263px;top:729.0px;width:94px;height:14px;line-height:14px;font-size:10.6px;color:#000000;text-align:center;font-weight:normal;">Customer A</div>
<div class="t" style="left:357px;top:729.0px;width:94px;height:14px;line-height:14px;font-size:10.6px;color:#000000;text-align:center;font-weight:normal;">23:15</div>
<div class="t" style="left:451px;top:729.0px;width:94px;height:14px;line-height:14px;font-size:10.6px;color:#000000;text-align:center;font-weight:normal;">23:45</div>
<div class="t" style="left:545px;top:729.0px;width:94px;height:14px;line-height:14px;font-size:10.6px;color:#000000;text-align:center;font-weight:normal;">30</div>
<div class="t" style="left:639px;top:729.0px;width:94px;height:14px;line-height:14px;font-size:10.6px;color:#000000;text-align:center;font-weight:normal;">30</div>
<div class="t" style="left:733px;top:729.0px;width:94px;height:14px;line-height:14px;font-size:10.6px;color:#000000;text-align:center;font-weight:normal;">100%</div>
<div class="t" style="left:827px;top:729.0px;width:76px;height:14px;line-height:14px;font-size:10.6px;color:#000000;text-align:center;font-weight:normal;">3</div>
<div class="t" style="left:903px;top:729.0px;width:111px;height:14px;line-height:14px;font-size:10.6px;color:#000000;text-align:center;font-weight:normal;">Employee 2</div>
<div class="t" style="left:1014px;top:729.0px;width:111px;height:14px;line-height:14px;font-size:10.6px;color:#000000;text-align:center;font-weight:normal;">Branch C</div>
<div class="t" style="left:1125px;top:729.0px;width:111px;height:14px;line-height:14px;font-size:10.6px;color:#000000;text-align:center;font-weight:normal;">Test 1</div>
<div class="t" style="left:1236px;top:729.0px;width:94px;height:14px;line-height:14px;font-size:10.6px;color:#000000;text-align:center;font-weight:normal;">TST0001</div>
<div class="t" style="left:1330px;top:729.0px;width:76px;height:14px;line-height:14px;font-size:10.6px;color:#000000;text-align:center;font-weight:normal;">42.00</div>
<div class="t" style="left:1406px;top:729.0px;width:76px;height:14px;line-height:14px;font-size:10.6px;color:#000000;text-align:center;font-weight:normal;">70.00</div>
<div class="t" style="left:1482px;top:729.0px;width:76px;height:14px;line-height:14px;font-size:10.6px;color:#000000;text-align:center;font-weight:normal;">65.00</div>
<div class="t" style="left:1558px;top:729.0px;width:76px;height:14px;line-height:14px;font-size:10.6px;color:#006100;text-align:center;font-weight:normal;">Pass</div>
<div style="left:1559px;top:753px;width:75px;height:33px;background:#ffc7ce"></div>
<div style="left:735px;top:312px;width:61px;height:30px;background:#8ecfaa;top:754px"></div>
<div class="t" style="left:169px;top:763.0px;width:94px;height:14px;line-height:14px;font-size:10.6px;color:#000000;text-align:center;font-weight:normal;">27-Jan-21</div>
<div class="t" style="left:263px;top:763.0px;width:94px;height:14px;line-height:14px;font-size:10.6px;color:#000000;text-align:center;font-weight:normal;">Customer B</div>
<div class="t" style="left:357px;top:763.0px;width:94px;height:14px;line-height:14px;font-size:10.6px;color:#000000;text-align:center;font-weight:normal;">1:00</div>
<div class="t" style="left:451px;top:763.0px;width:94px;height:14px;line-height:14px;font-size:10.6px;color:#000000;text-align:center;font-weight:normal;">2:00</div>
<div class="t" style="left:545px;top:763.0px;width:94px;height:14px;line-height:14px;font-size:10.6px;color:#000000;text-align:center;font-weight:normal;">60</div>
<div class="t" style="left:639px;top:763.0px;width:94px;height:14px;line-height:14px;font-size:10.6px;color:#000000;text-align:center;font-weight:normal;">40</div>
<div class="t" style="left:733px;top:763.0px;width:94px;height:14px;line-height:14px;font-size:10.6px;color:#000000;text-align:center;font-weight:normal;">67%</div>
<div class="t" style="left:827px;top:763.0px;width:76px;height:14px;line-height:14px;font-size:10.6px;color:#000000;text-align:center;font-weight:normal;">3</div>
<div class="t" style="left:903px;top:763.0px;width:111px;height:14px;line-height:14px;font-size:10.6px;color:#000000;text-align:center;font-weight:normal;">Employee 1</div>
<div class="t" style="left:1014px;top:763.0px;width:111px;height:14px;line-height:14px;font-size:10.6px;color:#000000;text-align:center;font-weight:normal;">Branch B</div>
<div class="t" style="left:1125px;top:763.0px;width:111px;height:14px;line-height:14px;font-size:10.6px;color:#000000;text-align:center;font-weight:normal;">Test 4</div>
<div class="t" style="left:1236px;top:763.0px;width:94px;height:14px;line-height:14px;font-size:10.6px;color:#000000;text-align:center;font-weight:normal;">TST0004</div>
<div class="t" style="left:1330px;top:763.0px;width:76px;height:14px;line-height:14px;font-size:10.6px;color:#000000;text-align:center;font-weight:normal;">44.00</div>
<div class="t" style="left:1406px;top:763.0px;width:76px;height:14px;line-height:14px;font-size:10.6px;color:#000000;text-align:center;font-weight:normal;">65.00</div>
<div class="t" style="left:1482px;top:763.0px;width:76px;height:14px;line-height:14px;font-size:10.6px;color:#000000;text-align:center;font-weight:normal;">76.00</div>
<div class="t" style="left:1558px;top:763.0px;width:76px;height:14px;line-height:14px;font-size:10.6px;color:#9c0006;text-align:center;font-weight:normal;">Fail</div>
<div class="t" style="left:1640px;top:763.0px;width:76px;height:14px;line-height:14px;font-size:10.6px;color:#000000;text-align:center;font-weight:normal;">11.00</div>
<svg style="position:absolute;left:1637px;top:763px;" width="11" height="13" viewBox="0 0 11 13"><path d="M5.2 0.7 L9.7 4.3 L9.7 8.9 L7.1 6.8 L7.1 11.6 L3.3 11.6 L3.3 6.8 L0.7 8.9 L0.7 4.3 Z" fill="#6aab8e" stroke="#2f6f50" stroke-width="0.9" stroke-linejoin="round"/></svg>
<div style="left:1559px;top:787px;width:75px;height:33px;background:#c6efce"></div>
<div style="left:735px;top:312px;width:35px;height:30px;background:#8ecfaa;top:788px"></div>
<div class="t" style="left:169px;top:797.0px;width:94px;height:14px;line-height:14px;font-size:10.6px;color:#000000;text-align:center;font-weight:normal;">1-Feb-21</div>
<div class="t" style="left:263px;top:797.0px;width:94px;height:14px;line-height:14px;font-size:10.6px;color:#000000;text-align:center;font-weight:normal;">Customer B</div>
<div class="t" style="left:357px;top:797.0px;width:94px;height:14px;line-height:14px;font-size:10.6px;color:#000000;text-align:center;font-weight:normal;">21:05</div>
<div class="t" style="left:451px;top:797.0px;width:94px;height:14px;line-height:14px;font-size:10.6px;color:#000000;text-align:center;font-weight:normal;">21:44</div>
<div class="t" style="left:545px;top:797.0px;width:94px;height:14px;line-height:14px;font-size:10.6px;color:#000000;text-align:center;font-weight:normal;">39</div>
<div class="t" style="left:639px;top:797.0px;width:94px;height:14px;line-height:14px;font-size:10.6px;color:#000000;text-align:center;font-weight:normal;">15</div>
<div class="t" style="left:733px;top:797.0px;width:94px;height:14px;line-height:14px;font-size:10.6px;color:#000000;text-align:center;font-weight:normal;">38%</div>
<div class="t" style="left:827px;top:797.0px;width:76px;height:14px;line-height:14px;font-size:10.6px;color:#000000;text-align:center;font-weight:normal;">3</div>
<div class="t" style="left:903px;top:797.0px;width:111px;height:14px;line-height:14px;font-size:10.6px;color:#000000;text-align:center;font-weight:normal;">Employee 3</div>
<div class="t" style="left:1014px;top:797.0px;width:111px;height:14px;line-height:14px;font-size:10.6px;color:#000000;text-align:center;font-weight:normal;">Branch C</div>
<div class="t" style="left:1125px;top:797.0px;width:111px;height:14px;line-height:14px;font-size:10.6px;color:#000000;text-align:center;font-weight:normal;">Test 2</div>
<div class="t" style="left:1236px;top:797.0px;width:94px;height:14px;line-height:14px;font-size:10.6px;color:#000000;text-align:center;font-weight:normal;">TST0002</div>
<div class="t" style="left:1330px;top:797.0px;width:76px;height:14px;line-height:14px;font-size:10.6px;color:#000000;text-align:center;font-weight:normal;">30.00</div>
<div class="t" style="left:1406px;top:797.0px;width:76px;height:14px;line-height:14px;font-size:10.6px;color:#000000;text-align:center;font-weight:normal;">45.00</div>
<div class="t" style="left:1482px;top:797.0px;width:76px;height:14px;line-height:14px;font-size:10.6px;color:#000000;text-align:center;font-weight:normal;">32.00</div>
<div class="t" style="left:1558px;top:797.0px;width:76px;height:14px;line-height:14px;font-size:10.6px;color:#006100;text-align:center;font-weight:normal;">Pass</div>
<div style="left:1559px;top:821px;width:75px;height:33px;background:#ffc7ce"></div>
<div style="left:735px;top:312px;width:91px;height:30px;background:#8ecfaa;top:822px"></div>
<div class="t" style="left:169px;top:831.0px;width:94px;height:14px;line-height:14px;font-size:10.6px;color:#000000;text-align:center;font-weight:normal;">22-Jan-21</div>
<div class="t" style="left:263px;top:831.0px;width:94px;height:14px;line-height:14px;font-size:10.6px;color:#000000;text-align:center;font-weight:normal;">Customer C</div>
<div class="t" style="left:357px;top:831.0px;width:94px;height:14px;line-height:14px;font-size:10.6px;color:#000000;text-align:center;font-weight:normal;">7:00</div>
<div class="t" style="left:451px;top:831.0px;width:94px;height:14px;line-height:14px;font-size:10.6px;color:#000000;text-align:center;font-weight:normal;">7:30</div>
<div class="t" style="left:545px;top:831.0px;width:94px;height:14px;line-height:14px;font-size:10.6px;color:#000000;text-align:center;font-weight:normal;">30</div>
<div class="t" style="left:639px;top:831.0px;width:94px;height:14px;line-height:14px;font-size:10.6px;color:#000000;text-align:center;font-weight:normal;">40</div>
<div class="t" style="left:733px;top:831.0px;width:94px;height:14px;line-height:14px;font-size:10.6px;color:#000000;text-align:center;font-weight:normal;">133%</div>
<div class="t" style="left:827px;top:831.0px;width:76px;height:14px;line-height:14px;font-size:10.6px;color:#000000;text-align:center;font-weight:normal;">1</div>
<div class="t" style="left:903px;top:831.0px;width:111px;height:14px;line-height:14px;font-size:10.6px;color:#000000;text-align:center;font-weight:normal;">Employee 3</div>
<div class="t" style="left:1014px;top:831.0px;width:111px;height:14px;line-height:14px;font-size:10.6px;color:#000000;text-align:center;font-weight:normal;">Branch C</div>
<div class="t" style="left:1125px;top:831.0px;width:111px;height:14px;line-height:14px;font-size:10.6px;color:#000000;text-align:center;font-weight:normal;">Test 4</div>
<div class="t" style="left:1236px;top:831.0px;width:94px;height:14px;line-height:14px;font-size:10.6px;color:#000000;text-align:center;font-weight:normal;">TST0004</div>
<div class="t" style="left:1330px;top:831.0px;width:76px;height:14px;line-height:14px;font-size:10.6px;color:#000000;text-align:center;font-weight:normal;">44.00</div>
<div class="t" style="left:1406px;top:831.0px;width:76px;height:14px;line-height:14px;font-size:10.6px;color:#000000;text-align:center;font-weight:normal;">65.00</div>
<div class="t" style="left:1482px;top:831.0px;width:76px;height:14px;line-height:14px;font-size:10.6px;color:#000000;text-align:center;font-weight:normal;">42.00</div>
<div class="t" style="left:1558px;top:831.0px;width:76px;height:14px;line-height:14px;font-size:10.6px;color:#9c0006;text-align:center;font-weight:normal;">Fail</div>
<div class="t" style="left:1640px;top:831.0px;width:76px;height:14px;line-height:14px;font-size:10.6px;color:#000000;text-align:center;font-weight:normal;">-2.00</div>
<svg style="position:absolute;left:1637px;top:831px;" width="11" height="13" viewBox="0 0 11 13"><path d="M3.3 0.7 L7.1 0.7 L7.1 5.6 L9.7 3.5 L9.7 8.1 L5.2 11.7 L0.7 8.1 L0.7 3.5 L3.3 5.6 Z" fill="#e05a35" stroke="#a83714" stroke-width="0.9" stroke-linejoin="round"/></svg>
<div style="left:1559px;top:855px;width:75px;height:33px;background:#ffc7ce"></div>
<div style="left:735px;top:312px;width:73px;height:30px;background:#8ecfaa;top:856px"></div>
<div class="t" style="left:169px;top:865.0px;width:94px;height:14px;line-height:14px;font-size:10.6px;color:#000000;text-align:center;font-weight:normal;">4-Feb-21</div>
<div class="t" style="left:263px;top:865.0px;width:94px;height:14px;line-height:14px;font-size:10.6px;color:#000000;text-align:center;font-weight:normal;">Customer A</div>
<div class="t" style="left:357px;top:865.0px;width:94px;height:14px;line-height:14px;font-size:10.6px;color:#000000;text-align:center;font-weight:normal;">8:00</div>
<div class="t" style="left:451px;top:865.0px;width:94px;height:14px;line-height:14px;font-size:10.6px;color:#000000;text-align:center;font-weight:normal;">8:50</div>
<div class="t" style="left:545px;top:865.0px;width:94px;height:14px;line-height:14px;font-size:10.6px;color:#000000;text-align:center;font-weight:normal;">50</div>
<div class="t" style="left:639px;top:865.0px;width:94px;height:14px;line-height:14px;font-size:10.6px;color:#000000;text-align:center;font-weight:normal;">40</div>
<div class="t" style="left:733px;top:865.0px;width:94px;height:14px;line-height:14px;font-size:10.6px;color:#000000;text-align:center;font-weight:normal;">80%</div>
<div class="t" style="left:827px;top:865.0px;width:76px;height:14px;line-height:14px;font-size:10.6px;color:#000000;text-align:center;font-weight:normal;">1</div>
<div class="t" style="left:903px;top:865.0px;width:111px;height:14px;line-height:14px;font-size:10.6px;color:#000000;text-align:center;font-weight:normal;">Employee 2</div>
<div class="t" style="left:1014px;top:865.0px;width:111px;height:14px;line-height:14px;font-size:10.6px;color:#000000;text-align:center;font-weight:normal;">Branch B</div>
<div class="t" style="left:1125px;top:865.0px;width:111px;height:14px;line-height:14px;font-size:10.6px;color:#000000;text-align:center;font-weight:normal;">Test 4</div>
<div class="t" style="left:1236px;top:865.0px;width:94px;height:14px;line-height:14px;font-size:10.6px;color:#000000;text-align:center;font-weight:normal;">TST0004</div>
<div class="t" style="left:1330px;top:865.0px;width:76px;height:14px;line-height:14px;font-size:10.6px;color:#000000;text-align:center;font-weight:normal;">44.00</div>
<div class="t" style="left:1406px;top:865.0px;width:76px;height:14px;line-height:14px;font-size:10.6px;color:#000000;text-align:center;font-weight:normal;">65.00</div>
<div class="t" style="left:1482px;top:865.0px;width:76px;height:14px;line-height:14px;font-size:10.6px;color:#000000;text-align:center;font-weight:normal;">72.00</div>
<div class="t" style="left:1558px;top:865.0px;width:76px;height:14px;line-height:14px;font-size:10.6px;color:#9c0006;text-align:center;font-weight:normal;">Fail</div>
<div class="t" style="left:1640px;top:865.0px;width:76px;height:14px;line-height:14px;font-size:10.6px;color:#000000;text-align:center;font-weight:normal;">7.00</div>
<svg style="position:absolute;left:1637px;top:865px;" width="11" height="13" viewBox="0 0 11 13"><path d="M5.2 0.7 L9.7 4.3 L9.7 8.9 L7.1 6.8 L7.1 11.6 L3.3 11.6 L3.3 6.8 L0.7 8.9 L0.7 4.3 Z" fill="#6aab8e" stroke="#2f6f50" stroke-width="0.9" stroke-linejoin="round"/></svg>
<div style="left:1559px;top:889px;width:75px;height:33px;background:#ffc7ce"></div>
<div style="left:735px;top:312px;width:91px;height:30px;background:#8ecfaa;top:890px"></div>
<div class="t" style="left:169px;top:899.0px;width:94px;height:14px;line-height:14px;font-size:10.6px;color:#000000;text-align:center;font-weight:normal;">5-Feb-21</div>
<div class="t" style="left:263px;top:899.0px;width:94px;height:14px;line-height:14px;font-size:10.6px;color:#000000;text-align:center;font-weight:normal;">Customer B</div>
<div class="t" style="left:357px;top:899.0px;width:94px;height:14px;line-height:14px;font-size:10.6px;color:#000000;text-align:center;font-weight:normal;">21:00</div>
<div class="t" style="left:451px;top:899.0px;width:94px;height:14px;line-height:14px;font-size:10.6px;color:#000000;text-align:center;font-weight:normal;">21:30</div>
<div class="t" style="left:545px;top:899.0px;width:94px;height:14px;line-height:14px;font-size:10.6px;color:#000000;text-align:center;font-weight:normal;">30</div>
<div class="t" style="left:639px;top:899.0px;width:94px;height:14px;line-height:14px;font-size:10.6px;color:#000000;text-align:center;font-weight:normal;">35</div>
<div class="t" style="left:733px;top:899.0px;width:94px;height:14px;line-height:14px;font-size:10.6px;color:#000000;text-align:center;font-weight:normal;">117%</div>
<div class="t" style="left:827px;top:899.0px;width:76px;height:14px;line-height:14px;font-size:10.6px;color:#000000;text-align:center;font-weight:normal;">2</div>
<div class="t" style="left:903px;top:899.0px;width:111px;height:14px;line-height:14px;font-size:10.6px;color:#000000;text-align:center;font-weight:normal;">Employee 3</div>
<div class="t" style="left:1014px;top:899.0px;width:111px;height:14px;line-height:14px;font-size:10.6px;color:#000000;text-align:center;font-weight:normal;">Branch B</div>
<div class="t" style="left:1125px;top:899.0px;width:111px;height:14px;line-height:14px;font-size:10.6px;color:#000000;text-align:center;font-weight:normal;">Test 3</div>
<div class="t" style="left:1236px;top:899.0px;width:94px;height:14px;line-height:14px;font-size:10.6px;color:#000000;text-align:center;font-weight:normal;">TST0003</div>
<div class="t" style="left:1330px;top:899.0px;width:76px;height:14px;line-height:14px;font-size:10.6px;color:#000000;text-align:center;font-weight:normal;">70.00</div>
<div class="t" style="left:1406px;top:899.0px;width:76px;height:14px;line-height:14px;font-size:10.6px;color:#000000;text-align:center;font-weight:normal;">110.00</div>
<div class="t" style="left:1482px;top:899.0px;width:76px;height:14px;line-height:14px;font-size:10.6px;color:#000000;text-align:center;font-weight:normal;">33.00</div>
<div class="t" style="left:1558px;top:899.0px;width:76px;height:14px;line-height:14px;font-size:10.6px;color:#9c0006;text-align:center;font-weight:normal;">Fail</div>
<div class="t" style="left:1640px;top:899.0px;width:76px;height:14px;line-height:14px;font-size:10.6px;color:#000000;text-align:center;font-weight:normal;">-37.00</div>
<svg style="position:absolute;left:1637px;top:899px;" width="11" height="13" viewBox="0 0 11 13"><path d="M3.3 0.7 L7.1 0.7 L7.1 5.6 L9.7 3.5 L9.7 8.1 L5.2 11.7 L0.7 8.1 L0.7 3.5 L3.3 5.6 Z" fill="#e05a35" stroke="#a83714" stroke-width="0.9" stroke-linejoin="round"/></svg>
<div style="left:1559px;top:923px;width:75px;height:33px;background:#ffc7ce"></div>
<div style="left:735px;top:312px;width:61px;height:30px;background:#8ecfaa;top:924px"></div>
<div class="t" style="left:169px;top:933.0px;width:94px;height:14px;line-height:14px;font-size:10.6px;color:#000000;text-align:center;font-weight:normal;">15-Jan-21</div>
<div class="t" style="left:263px;top:933.0px;width:94px;height:14px;line-height:14px;font-size:10.6px;color:#000000;text-align:center;font-weight:normal;">Customer B</div>
<div class="t" style="left:357px;top:933.0px;width:94px;height:14px;line-height:14px;font-size:10.6px;color:#000000;text-align:center;font-weight:normal;">23:00</div>
<div class="t" style="left:451px;top:933.0px;width:94px;height:14px;line-height:14px;font-size:10.6px;color:#000000;text-align:center;font-weight:normal;">23:30</div>
<div class="t" style="left:545px;top:933.0px;width:94px;height:14px;line-height:14px;font-size:10.6px;color:#000000;text-align:center;font-weight:normal;">30</div>
<div class="t" style="left:639px;top:933.0px;width:94px;height:14px;line-height:14px;font-size:10.6px;color:#000000;text-align:center;font-weight:normal;">20</div>
<div class="t" style="left:733px;top:933.0px;width:94px;height:14px;line-height:14px;font-size:10.6px;color:#000000;text-align:center;font-weight:normal;">67%</div>
<div class="t" style="left:827px;top:933.0px;width:76px;height:14px;line-height:14px;font-size:10.6px;color:#000000;text-align:center;font-weight:normal;">3</div>
<div class="t" style="left:903px;top:933.0px;width:111px;height:14px;line-height:14px;font-size:10.6px;color:#000000;text-align:center;font-weight:normal;">Employee 3</div>
<div class="t" style="left:1014px;top:933.0px;width:111px;height:14px;line-height:14px;font-size:10.6px;color:#000000;text-align:center;font-weight:normal;">Branch B</div>
<div class="t" style="left:1125px;top:933.0px;width:111px;height:14px;line-height:14px;font-size:10.6px;color:#000000;text-align:center;font-weight:normal;">Test 5</div>
<div class="t" style="left:1236px;top:933.0px;width:94px;height:14px;line-height:14px;font-size:10.6px;color:#000000;text-align:center;font-weight:normal;">TST0005</div>
<div class="t" style="left:1330px;top:933.0px;width:76px;height:14px;line-height:14px;font-size:10.6px;color:#000000;text-align:center;font-weight:normal;">12.00</div>
<div class="t" style="left:1406px;top:933.0px;width:76px;height:14px;line-height:14px;font-size:10.6px;color:#000000;text-align:center;font-weight:normal;">60.00</div>
<div class="t" style="left:1482px;top:933.0px;width:76px;height:14px;line-height:14px;font-size:10.6px;color:#000000;text-align:center;font-weight:normal;">68.00</div>
<div class="t" style="left:1558px;top:933.0px;width:76px;height:14px;line-height:14px;font-size:10.6px;color:#9c0006;text-align:center;font-weight:normal;">Fail</div>
<div class="t" style="left:1640px;top:933.0px;width:76px;height:14px;line-height:14px;font-size:10.6px;color:#000000;text-align:center;font-weight:normal;">8.00</div>
<svg style="position:absolute;left:1637px;top:933px;" width="11" height="13" viewBox="0 0 11 13"><path d="M5.2 0.7 L9.7 4.3 L9.7 8.9 L7.1 6.8 L7.1 11.6 L3.3 11.6 L3.3 6.8 L0.7 8.9 L0.7 4.3 Z" fill="#6aab8e" stroke="#2f6f50" stroke-width="0.9" stroke-linejoin="round"/></svg>
<div style="left:1559px;top:957px;width:75px;height:33px;background:#c6efce"></div>
<div style="left:735px;top:312px;width:64px;height:30px;background:#8ecfaa;top:958px"></div>
<div class="t" style="left:169px;top:967.0px;width:94px;height:14px;line-height:14px;font-size:10.6px;color:#000000;text-align:center;font-weight:normal;">13-Jan-21</div>
<div class="t" style="left:263px;top:967.0px;width:94px;height:14px;line-height:14px;font-size:10.6px;color:#000000;text-align:center;font-weight:normal;">Customer C</div>
<div class="t" style="left:357px;top:967.0px;width:94px;height:14px;line-height:14px;font-size:10.6px;color:#000000;text-align:center;font-weight:normal;">15:00</div>
<div class="t" style="left:451px;top:967.0px;width:94px;height:14px;line-height:14px;font-size:10.6px;color:#000000;text-align:center;font-weight:normal;">15:50</div>
<div class="t" style="left:545px;top:967.0px;width:94px;height:14px;line-height:14px;font-size:10.6px;color:#000000;text-align:center;font-weight:normal;">50</div>
<div class="t" style="left:639px;top:967.0px;width:94px;height:14px;line-height:14px;font-size:10.6px;color:#000000;text-align:center;font-weight:normal;">35</div>
<div class="t" style="left:733px;top:967.0px;width:94px;height:14px;line-height:14px;font-size:10.6px;color:#000000;text-align:center;font-weight:normal;">70%</div>
<div class="t" style="left:827px;top:967.0px;width:76px;height:14px;line-height:14px;font-size:10.6px;color:#000000;text-align:center;font-weight:normal;">2</div>
<div class="t" style="left:903px;top:967.0px;width:111px;height:14px;line-height:14px;font-size:10.6px;color:#000000;text-align:center;font-weight:normal;">Employee 1</div>
<div class="t" style="left:1014px;top:967.0px;width:111px;height:14px;line-height:14px;font-size:10.6px;color:#000000;text-align:center;font-weight:normal;">Branch C</div>
<div class="t" style="left:1125px;top:967.0px;width:111px;height:14px;line-height:14px;font-size:10.6px;color:#000000;text-align:center;font-weight:normal;">Test 3</div>
<div class="t" style="left:1236px;top:967.0px;width:94px;height:14px;line-height:14px;font-size:10.6px;color:#000000;text-align:center;font-weight:normal;">TST0003</div>
<div class="t" style="left:1330px;top:967.0px;width:76px;height:14px;line-height:14px;font-size:10.6px;color:#000000;text-align:center;font-weight:normal;">70.00</div>
<div class="t" style="left:1406px;top:967.0px;width:76px;height:14px;line-height:14px;font-size:10.6px;color:#000000;text-align:center;font-weight:normal;">110.00</div>
<div class="t" style="left:1482px;top:967.0px;width:76px;height:14px;line-height:14px;font-size:10.6px;color:#000000;text-align:center;font-weight:normal;">91.00</div>
<div class="t" style="left:1558px;top:967.0px;width:76px;height:14px;line-height:14px;font-size:10.6px;color:#006100;text-align:center;font-weight:normal;">Pass</div>
<div style="left:170px;top:344px;width:1719px;height:1px;background:#d9d9d9"></div>
<div style="left:170px;top:378px;width:1719px;height:1px;background:#d9d9d9"></div>
<div style="left:170px;top:412px;width:1719px;height:1px;background:#d9d9d9"></div>
<div style="left:170px;top:446px;width:1719px;height:1px;background:#d9d9d9"></div>
<div style="left:170px;top:480px;width:1719px;height:1px;background:#d9d9d9"></div>
<div style="left:170px;top:514px;width:1719px;height:1px;background:#d9d9d9"></div>
<div style="left:170px;top:548px;width:1719px;height:1px;background:#d9d9d9"></div>
<div style="left:170px;top:582px;width:1719px;height:1px;background:#d9d9d9"></div>
<div style="left:170px;top:616px;width:1719px;height:1px;background:#d9d9d9"></div>
<div style="left:170px;top:650px;width:1719px;height:1px;background:#d9d9d9"></div>
<div style="left:170px;top:684px;width:1719px;height:1px;background:#d9d9d9"></div>
<div style="left:170px;top:718px;width:1719px;height:1px;background:#d9d9d9"></div>
<div style="left:170px;top:752px;width:1719px;height:1px;background:#d9d9d9"></div>
<div style="left:170px;top:786px;width:1719px;height:1px;background:#d9d9d9"></div>
<div style="left:170px;top:820px;width:1719px;height:1px;background:#d9d9d9"></div>
<div style="left:170px;top:854px;width:1719px;height:1px;background:#d9d9d9"></div>
<div style="left:170px;top:888px;width:1719px;height:1px;background:#d9d9d9"></div>
<div style="left:170px;top:922px;width:1719px;height:1px;background:#d9d9d9"></div>
<div style="left:170px;top:956px;width:1719px;height:1px;background:#d9d9d9"></div>
<div style="left:170px;top:990px;width:1719px;height:1px;background:#d9d9d9"></div>
<div style="left:263px;top:311px;width:1px;height:680px;background:#d9d9d9"></div>
<div style="left:357px;top:311px;width:1px;height:680px;background:#d9d9d9"></div>
<div style="left:451px;top:311px;width:1px;height:680px;background:#d9d9d9"></div>
<div style="left:545px;top:311px;width:1px;height:680px;background:#d9d9d9"></div>
<div style="left:639px;top:311px;width:1px;height:680px;background:#d9d9d9"></div>
<div style="left:733px;top:311px;width:1px;height:680px;background:#d9d9d9"></div>
<div style="left:827px;top:311px;width:1px;height:680px;background:#d9d9d9"></div>
<div style="left:903px;top:311px;width:1px;height:680px;background:#d9d9d9"></div>
<div style="left:1014px;top:311px;width:1px;height:680px;background:#d9d9d9"></div>
<div style="left:1125px;top:311px;width:1px;height:680px;background:#d9d9d9"></div>
<div style="left:1236px;top:311px;width:1px;height:680px;background:#d9d9d9"></div>
<div style="left:1330px;top:311px;width:1px;height:680px;background:#d9d9d9"></div>
<div style="left:1406px;top:311px;width:1px;height:680px;background:#d9d9d9"></div>
<div style="left:1482px;top:311px;width:1px;height:680px;background:#d9d9d9"></div>
<div style="left:1558px;top:311px;width:1px;height:680px;background:#d9d9d9"></div>
<div style="left:1634px;top:311px;width:1px;height:680px;background:#d9d9d9"></div>
<div style="left:1710px;top:311px;width:1px;height:680px;background:#d9d9d9"></div>
<div style="left:1888px;top:311px;width:1px;height:680px;background:#d9d9d9"></div>
<div style="left:0px;top:310px;width:1897px;height:1px;background:#9b9b9b"></div>
<div style="left:169px;top:243px;width:1px;height:748px;background:#9b9b9b"></div>
<div style="left:33px;top:243px;width:1865px;height:1px;background:#9b9b9b"></div>
<div style="left:33px;top:243px;width:1px;height:748px;background:#9b9b9b"></div>
<div style="left:1897px;top:243px;width:1px;height:748px;background:#9b9b9b"></div>
<div style="left:33px;top:990px;width:1865px;height:1px;background:#9b9b9b"></div>
<div style="left:1889px;top:244px;width:8px;height:66px;background:#ffffff"></div>
<div style="left:1893px;top:244px;width:1px;height:746px;background:#e0e0e0"></div>
<div style="left:1237px;top:326px;width:17px;height:17px;background:#f0f0f0;border:1px solid #a9a9a9;box-sizing:border-box"></div>
<svg style="position:absolute;left:1241px;top:332px;" width="9" height="5" viewBox="0 0 9 5"><path d="M0 0 L9 0 L4.5 5 Z" fill="#595959"/></svg>
<div style="left:36px;top:247px;width:131px;height:28px;background:#8ecfaa;border-radius:5px;box-shadow:0 0 1px 1px #9d9d9d, 1px 1px 2px #b0b0b0"></div>
<svg style="position:absolute;left:37px;top:249px;" width="23" height="16" viewBox="0 0 23 16"><path d="M0 8.5 L11.5 0 L23 8.5 L17.5 8.5 L17.5 16 L6 16 L6 8.5 Z" fill="#4cb27f"/></svg>
<div class="t" style="left:61px;top:253.5px;height:14px;line-height:14px;font-size:11.6px;color:#ffffff;text-align:left;font-weight:bold;">Show Dashboard</div>
<div style="left:35px;top:279px;width:132px;height:14px;background:#efefef;border-bottom:2px solid #6e6e6e;border-right:1px solid #6e6e6e;box-sizing:border-box"></div>
<div class="t" style="left:35px;top:279.0px;width:132px;height:13px;line-height:13px;font-size:10.6px;color:#000;text-align:center;font-weight:bold;">Full Screen</div>
<div style="left:35px;top:296px;width:132px;height:14px;background:#efefef;border-bottom:2px solid #6e6e6e;border-right:1px solid #6e6e6e;box-sizing:border-box"></div>
<div class="t" style="left:35px;top:296.0px;width:132px;height:13px;line-height:13px;font-size:10.6px;color:#000;text-align:center;font-weight:bold;">Refresh</div>
<div style="left:2px;top:269px;width:14px;height:14px;border:1px solid #8a96a3;box-sizing:border-box"></div>
<svg style="position:absolute;left:4px;top:271px;" width="10" height="10" viewBox="0 0 10 10"><path d="M5 1.5 V8.5 M1.5 5 H8.5" stroke="#555" stroke-width="1.8"/></svg>
<div style="left:1902px;top:245px;width:15px;height:745px;background:#dcdcdc"></div>
<div style="left:1902px;top:245px;width:15px;height:15px;background:#fff;border:1px solid #c4c4c4;box-sizing:border-box"></div>
<svg style="position:absolute;left:1905px;top:250px;" width="9" height="5" viewBox="0 0 9 5"><path d="M0 5 L4.5 0 L9 5 Z" fill="#606060"/></svg>
<div style="left:1902px;top:314px;width:15px;height:661px;background:#fff;border:1px solid #c4c4c4;box-sizing:border-box"></div>
<div style="left:1902px;top:975px;width:15px;height:15px;background:#fff;border:1px solid #c4c4c4;box-sizing:border-box"></div>
<svg style="position:absolute;left:1905px;top:980px;" width="9" height="5" viewBox="0 0 9 5"><path d="M0 0 L9 0 L4.5 5 Z" fill="#606060"/></svg>
<div style="left:0px;top:991px;width:1920px;height:27px;background:#e6e6e6"></div>
<svg style="position:absolute;left:25px;top:998px;" width="6" height="10" viewBox="0 0 6 10"><path d="M6 0 L0 5 L6 10 Z" fill="#c4c4c4"/></svg>
<svg style="position:absolute;left:55px;top:998px;" width="6" height="10" viewBox="0 0 6 10"><path d="M0 0 L6 5 L0 10 Z" fill="#c4c4c4"/></svg>
<div style="left:100px;top:994px;width:1px;height:20px;background:#b4b4b4"></div>
<div style="left:103px;top:993px;width:96px;height:22px;background:#c00000"></div>
<div class="t" style="left:103px;top:995.0px;width:96px;height:18px;line-height:18px;font-size:13px;color:#ffffff;text-align:center;font-weight:normal;">Introduction</div>
<div style="left:201px;top:990px;width:133px;height:25px;background:linear-gradient(#ffffff,#d7efe0);border-left:1px solid #9b9b9b;border-right:1px solid #9b9b9b;box-sizing:border-box"></div>
<div style="left:202px;top:990px;width:131px;height:1px;background:#fff"></div>
<div style="left:202px;top:1013px;width:131px;height:2px;background:#217346"></div>
<div class="t" style="left:201px;top:995.0px;width:133px;height:18px;line-height:18px;font-size:13px;color:#217346;text-align:center;font-weight:bold;">Testing Raw Data</div>
<div style="left:336px;top:993px;width:75px;height:22px;background:#8ecfaa"></div>
<div class="t" style="left:336px;top:995.0px;width:75px;height:18px;line-height:18px;font-size:13px;color:#111111;text-align:center;font-weight:normal;">Database</div>
<div style="left:413px;top:994px;width:1px;height:20px;background:#b4b4b4"></div>
<svg style="position:absolute;left:446px;top:995px;" width="18" height="18" viewBox="0 0 18 18"><circle cx="9" cy="9" r="7.5" fill="none" stroke="#7a7a7a" stroke-width="1.3"/><path d="M9 5 V13 M5 9 H13" stroke="#7a7a7a" stroke-width="1.5"/></svg>
<div style="left:1152px;top:999px;width:2px;height:2px;background:#9a9a9a"></div>
<div style="left:1152px;top:1003px;width:2px;height:2px;background:#9a9a9a"></div>
<div style="left:1152px;top:1007px;width:2px;height:2px;background:#9a9a9a"></div>
<div style="left:1169px;top:997px;width:729px;height:15px;background:#dcdcdc"></div>
<div style="left:1169px;top:997px;width:15px;height:15px;background:#fff;border:1px solid #c4c4c4;box-sizing:border-box"></div>
<svg style="position:absolute;left:1173px;top:1000px;" width="6" height="9" viewBox="0 0 6 9"><path d="M6 0 L0 4.5 L6 9 Z" fill="#606060"/></svg>
<div style="left:1184px;top:997px;width:697px;height:15px;background:#fff;border:1px solid #c4c4c4;box-sizing:border-box"></div>
<div style="left:1882px;top:997px;width:15px;height:15px;background:#fff;border:1px solid #c4c4c4;box-sizing:border-box"></div>
<svg style="position:absolute;left:1887px;top:1000px;" width="6" height="9" viewBox="0 0 6 9"><path d="M0 0 L6 4.5 L0 9 Z" fill="#606060"/></svg>
<div style="left:0px;top:1018px;width:1920px;height:22px;background:#f2f2f2"></div>
<div style="left:0px;top:1018px;width:1920px;height:1px;background:#d6d6d6"></div>
<div class="t" style="left:7px;top:1022.5px;height:15px;line-height:15px;font-size:11px;color:#444444;text-align:left;font-weight:normal;">Ready</div>
<div style="left:1626px;top:1019px;width:40px;height:21px;background:#c6c6c6"></div>
<div class="t" style="left:1890px;top:1022.0px;height:15px;line-height:15px;font-size:11px;color:#444444;text-align:left;font-weight:normal;">85%</div>
<div style="left:1765px;top:1029px;width:100px;height:1px;background:#9a9a9a"></div>
<div style="left:1805px;top:1024px;width:5px;height:10px;background:#6b6b6b"></div>
<div style="left:1815px;top:1026px;width:1px;height:6px;background:#9a9a9a"></div>
<div style="left:1752px;top:1028px;width:9px;height:1px;background:#555"></div>
<div style="left:1870px;top:1028px;width:9px;height:1px;background:#555"></div>
<div style="left:1874px;top:1024px;width:1px;height:9px;background:#555"></div>
<div style="left:0px;top:1040px;width:1920px;height:8px;background:#d3e0e8"></div>
<div style="left:48px;top:1041px;width:343px;height:7px;background:#ffffff;border:1px solid #c8c8c8;box-sizing:border-box"></div>
<div style="left:838px;top:1040px;width:40px;height:8px;background:#9cd2a8"></div>
<div style="left:1128px;top:1040px;width:48px;height:8px;background:#e8eef2"></div>
<div style="left:1915px;top:1040px;width:1px;height:8px;background:#555"></div>
<div class="t" style="left:1811px;top:1042.0px;height:16px;line-height:16px;font-size:12px;color:#111111;text-align:left;font-weight:normal;">10:21 PM</div>
<svg style="position:absolute;left:21px;top:9px;" width="16" height="16" viewBox="0 0 16 16"><path d="M1 1 H13 L15 3 V15 H1 Z" fill="none" stroke="#fff" stroke-width="1.6"/><rect x="4" y="1.5" width="8" height="4.5" fill="#fff"/><path d="M4 15 V10 H12 V15" fill="none" stroke="#fff" stroke-width="1.6"/><rect x="6" y="11" width="2" height="4" fill="#fff"/></svg>
<svg style="position:absolute;left:50px;top:9px;" width="16" height="14" viewBox="0 0 16 14"><path d="M2 5.5 H10 A4.5 4.5 0 0 1 10 13.5 H7" fill="none" stroke="#5d9e7c" stroke-width="2"/><path d="M5.5 1.5 L1.5 5.5 L5.5 9.5" fill="none" stroke="#5d9e7c" stroke-width="2"/></svg>
<svg style="position:absolute;left:72px;top:14px;" width="7" height="4" viewBox="0 0 7 4"><path d="M1 0.8 L3.5 3.2 L6 0.8" fill="none" stroke="#5d9e7c" stroke-width="1.2"/></svg>
<svg style="position:absolute;left:89px;top:9px;" width="16" height="14" viewBox="0 0 16 14"><path d="M14 5.5 H6 A4.5 4.5 0 0 0 6 13.5 H9" fill="none" stroke="#5d9e7c" stroke-width="2"/><path d="M10.5 1.5 L14.5 5.5 L10.5 9.5" fill="none" stroke="#5d9e7c" stroke-width="2"/></svg>
<svg style="position:absolute;left:111px;top:14px;" width="7" height="4" viewBox="0 0 7 4"><path d="M1 0.8 L3.5 3.2 L6 0.8" fill="none" stroke="#5d9e7c" stroke-width="1.2"/></svg>
<svg style="position:absolute;left:132px;top:13px;" width="8" height="8" viewBox="0 0 8 8"><rect x="0" y="0" width="8" height="1.5" fill="#fff"/><path d="M0 3 H8 L4 7.5 Z" fill="#fff"/></svg>
<svg style="position:absolute;left:1751px;top:9px;" width="15" height="12" viewBox="0 0 15 12"><rect x="0.5" y="0.5" width="13" height="10" fill="none" stroke="#fff" stroke-width="1"/><path d="M0.5 3 H13.5" stroke="#fff"/><path d="M7 9 V4.5 M5 6.5 L7 4.5 L9 6.5" fill="none" stroke="#fff"/></svg>
<div style="left:1800px;top:15px;width:10px;height:1px;background:#fff"></div>
<svg style="position:absolute;left:1845px;top:9px;" width="12" height="12" viewBox="0 0 12 12"><rect x="0.5" y="2.5" width="8" height="8" fill="none" stroke="#fff"/><path d="M2.5 2.5 V0.5 H10.5 V8.5 H8.5" fill="none" stroke="#fff"/></svg>
<svg style="position:absolute;left:1891px;top:9px;" width="12" height="12" viewBox="0 0 12 12"><path d="M0.5 0.5 L10.5 10.5 M10.5 0.5 L0.5 10.5" stroke="#fff" stroke-width="1.1"/></svg>
<svg style="position:absolute;left:650px;top:40px;" width="15" height="18" viewBox="0 0 15 18"><path d="M5.6 11.8 C5 9.8 2.6 8.4 2.6 5.8 A4.9 4.9 0 0 1 12.4 5.8 C12.4 8.4 10 9.8 9.4 11.8 Z" fill="none" stroke="#fff" stroke-width="1.2"/><rect x="5.8" y="12.2" width="3.4" height="2.6" fill="none" stroke="#fff" stroke-width="1.1"/><rect x="6" y="16.2" width="3" height="1" fill="#fff"/></svg>
<svg style="position:absolute;left:1847px;top:40px;" width="17" height="17" viewBox="0 0 17 17"><circle cx="8" cy="5" r="4" fill="none" stroke="#fff" stroke-width="1.2"/><path d="M1 16.5 C1.5 11.5 4 9.5 8 9.5 C9.5 9.5 10.5 9.8 11.3 10.3" fill="none" stroke="#fff" stroke-width="1.2"/><path d="M12.5 10.5 V16.5 M9.5 13.5 H15.5" stroke="#fff" stroke-width="1.2"/></svg>
<div class="t" style="left:1867px;top:41.0px;height:16px;line-height:16px;font-size:12px;color:#ffffff;text-align:left;font-weight:normal;">Share</div>
<svg style="position:absolute;left:16px;top:71px;" width="31" height="32" viewBox="0 0 31 32"><rect x="1" y="3" width="24" height="26" rx="1.5" fill="#eec27b"/><rect x="6" y="3.5" width="14" height="4" fill="#7d7d7d"/><rect x="10" y="0.5" width="6" height="4" rx="1" fill="none" stroke="#7d7d7d" stroke-width="1.5"/><path d="M15.5 12.5 H25.5 L29.5 16.5 V30.5 H15.5 Z" fill="#fff" stroke="#7d7d7d" stroke-width="1"/><path d="M25.5 12.5 V16.5 H29.5" fill="none" stroke="#7d7d7d"/></svg>
<div class="t" style="left:15px;top:105.0px;height:16px;line-height:16px;font-size:12px;color:#262626;text-align:left;font-weight:normal;">Paste</div>
<svg style="position:absolute;left:26px;top:126px;" width="7" height="4" viewBox="0 0 7 4"><path d="M1 0.8 L3.5 3.2 L6 0.8" fill="none" stroke="#555" stroke-width="1.2"/></svg>
<svg style="position:absolute;left:53px;top:70px;" width="16" height="16" viewBox="0 0 16 16"><path d="M4 1 L11 10 M12 1 L5 10" stroke="#666" stroke-width="1.3"/><circle cx="3.5" cy="12.5" r="2.5" fill="none" stroke="#3f7dc0" stroke-width="1.2"/><circle cx="11.5" cy="12.5" r="2.5" fill="none" stroke="#3f7dc0" stroke-width="1.2"/></svg>
<div class="t" style="left:72px;top:71.0px;height:16px;line-height:16px;font-size:12px;color:#262626;text-align:left;font-weight:normal;">Cut</div>
<svg style="position:absolute;left:52px;top:93px;" width="17" height="16" viewBox="0 0 17 16"><path d="M0.5 0.5 H6 L8 2.5 V11.5 H0.5 Z" fill="#fff" stroke="#777"/><path d="M5.5 4.5 H11.5 L15.5 8.5 V15.5 H5.5 Z" fill="#fff" stroke="#777"/><path d="M2.5 4.5 H5 M2.5 7 H5 M8 10 H13 M8 12 H13 M8 14 H13" stroke="#3f7dc0" stroke-width="0.9"/></svg>
<div class="t" style="left:72px;top:94.0px;height:16px;line-height:16px;font-size:12px;color:#262626;text-align:left;font-weight:normal;">Copy</div>
<svg style="position:absolute;left:111px;top:99px;" width="7" height="4" viewBox="0 0 7 4"><path d="M1 0.8 L3.5 3.2 L6 0.8" fill="none" stroke="#555" stroke-width="1.2"/></svg>
<svg style="position:absolute;left:52px;top:116px;" width="18" height="16" viewBox="0 0 18 16"><path d="M11 1 L16.5 6.5 L14 9 L8.5 3.5 Z" fill="#6e6e6e"/><path d="M8.5 4.5 L13 9 L9 13 L7 11.5 L4.5 15 L1 11.5 L4.5 9 L3 7 Z" fill="#e9bf7e"/></svg>
<div class="t" style="left:72px;top:117.0px;height:16px;line-height:16px;font-size:12px;color:#262626;text-align:left;font-weight:normal;">Format Painter</div>
<div class="t" style="left:48px;top:140.0px;height:16px;line-height:16px;font-size:12px;color:#444;text-align:left;font-weight:normal;">Clipboard</div>
<svg style="position:absolute;left:153px;top:144px;" width="9" height="9" viewBox="0 0 9 9"><path d="M0.5 8 V0.5 H8 M3 3 L8 8 M8 4.5 V8 H4.5" fill="none" stroke="#666" stroke-width="1"/></svg>
<div style="left:165px;top:68px;width:1px;height:84px;background:#c6c6c6"></div>
<div style="left:173px;top:75px;width:124px;height:24px;background:#fff;border:1px solid #ababab"></div>
<div class="t" style="left:177px;top:78.0px;height:17px;line-height:17px;font-size:12.5px;color:#262626;text-align:left;font-weight:normal;">Arial</div>
<svg style="position:absolute;left:285px;top:85px;" width="7" height="4" viewBox="0 0 7 4"><path d="M0 0 H7 L3.5 4 Z" fill="#444"/></svg>
<div style="left:298px;top:75px;width:44px;height:24px;background:#fff;border:1px solid #ababab"></div>
<div class="t" style="left:301px;top:78.0px;height:17px;line-height:17px;font-size:12.5px;color:#262626;text-align:left;font-weight:normal;">10</div>
<svg style="position:absolute;left:330px;top:85px;" width="7" height="4" viewBox="0 0 7 4"><path d="M0 0 H7 L3.5 4 Z" fill="#444"/></svg>
<div class="t" style="left:348px;top:75.5px;height:21px;line-height:21px;font-size:15px;color:#444;text-align:left;font-weight:normal;">A</div>
<svg style="position:absolute;left:357px;top:78px;" width="6" height="4" viewBox="0 0 6 4"><path d="M0 4 L3 0 L6 4 Z" fill="#3f7dc0"/></svg>
<div class="t" style="left:373px;top:79.5px;height:16px;line-height:16px;font-size:12px;color:#444;text-align:left;font-weight:normal;">A</div>
<svg style="position:absolute;left:381px;top:79px;" width="6" height="4" viewBox="0 0 6 4"><path d="M0 0 H6 L3 4 Z" fill="#3f7dc0"/></svg>
<div class="t" style="left:178px;top:108.0px;height:18px;line-height:18px;font-size:13px;color:#444;text-align:left;font-weight:bold;">B</div>
<svg style="position:absolute;left:202px;top:111px;" width="10" height="11" viewBox="0 0 10 11"><path d="M4 0.8 H9.5 M0.5 10.2 H6 M7 0.8 L3.2 10.2" fill="none" stroke="#4a4a4a" stroke-width="1.6"/></svg>
<div class="t" style="left:226px;top:107.5px;height:18px;line-height:18px;font-size:13px;color:#444;text-align:left;font-weight:normal;text-decoration:underline">U</div>
<svg style="position:absolute;left:247px;top:115px;" width="7" height="4" viewBox="0 0 7 4"><path d="M1 0.8 L3.5 3.2 L6 0.8" fill="none" stroke="#555" stroke-width="1.2"/></svg>
<div style="left:262px;top:107px;width:1px;height:21px;background:#d0d0d0"></div>
<svg style="position:absolute;left:270px;top:109px;" width="15" height="15" viewBox="0 0 15 15"><rect x="0" y="0" width="1" height="1" fill="#8a8a8a"/><rect x="0" y="7" width="1" height="1" fill="#8a8a8a"/><rect x="2" y="0" width="1" height="1" fill="#8a8a8a"/><rect x="2" y="7" width="1" height="1" fill="#8a8a8a"/><rect x="4" y="0" width="1" height="1" fill="#8a8a8a"/><rect x="4" y="7" width="1" height="1" fill="#8a8a8a"/><rect x="6" y="0" width="1" height="1" fill="#8a8a8a"/><rect x="6" y="7" width="1" height="1" fill="#8a8a8a"/><rect x="8" y="0" width="1" height="1" fill="#8a8a8a"/><rect x="8" y="7" width="1" height="1" fill="#8a8a8a"/><rect x="10" y="0" width="1" height="1" fill="#8a8a8a"/><rect x="10" y="7" width="1" height="1" fill="#8a8a8a"/><rect x="12" y="0" width="1" height="1" fill="#8a8a8a"/><rect x="12" y="7" width="1" height="1" fill="#8a8a8a"/><rect x="14" y="0" width="1" height="1" fill="#8a8a8a"/><rect x="14" y="7" width="1" height="1" fill="#8a8a8a"/><rect x="0" y="0" width="1" height="1" fill="#8a8a8a"/><rect x="0" y="2" width="1" height="1" fill="#8a8a8a"/><rect x="0" y="4" width="1" height="1" fill="#8a8a8a"/><rect x="0" y="6" width="1" height="1" fill="#8a8a8a"/><rect x="0" y="8" width="1" height="1" fill="#8a8a8a"/><rect x="0" y="10" width="1" height="1" fill="#8a8a8a"/><rect x="0" y="12" width="1" height="1" fill="#8a8a8a"/><rect x="7" y="0" width="1" height="1" fill="#8a8a8a"/><rect x="7" y="2" width="1" height="1" fill="#8a8a8a"/><rect x="7" y="4" width="1" height="1" fill="#8a8a8a"/><rect x="7" y="6" width="1" height="1" fill="#8a8a8a"/><rect x="7" y="8" width="1" height="1" fill="#8a8a8a"/><rect x="7" y="10" width="1" height="1" fill="#8a8a8a"/><rect x="7" y="12" width="1" height="1" fill="#8a8a8a"/><rect x="14" y="0" width="1" height="1" fill="#8a8a8a"/><rect x="14" y="2" width="1" height="1" fill="#8a8a8a"/><rect x="14" y="4" width="1" height="1" fill="#8a8a8a"/><rect x="14" y="6" width="1" height="1" fill="#8a8a8a"/><rect x="14" y="8" width="1" height="1" fill="#8a8a8a"/><rect x="14" y="10" width="1" height="1" fill="#8a8a8a"/><rect x="14" y="12" width="1" height="1" fill="#8a8a8a"/><rect x="0" y="13.5" width="15" height="1.3" fill="#555"/></svg>
<svg style="position:absolute;left:293px;top:115px;" width="7" height="4" viewBox="0 0 7 4"><path d="M1 0.8 L3.5 3.2 L6 0.8" fill="none" stroke="#555" stroke-width="1.2"/></svg>
<div style="left:308px;top:107px;width:1px;height:21px;background:#d0d0d0"></div>
<svg style="position:absolute;left:315px;top:108px;" width="19" height="19" viewBox="0 0 19 19"><path d="M6 3 L12 9 L8 13 L2 7 Z" fill="none" stroke="#555" stroke-width="1.1"/><path d="M6 0.5 V6" stroke="#555"/><path d="M13 8 C15 10 15.5 11 14.5 12 C13.5 11.5 13 10 13 8 Z" fill="#3f7dc0"/><rect x="1" y="13.5" width="16" height="4" fill="#ffff00"/></svg>
<svg style="position:absolute;left:339px;top:115px;" width="7" height="4" viewBox="0 0 7 4"><path d="M1 0.8 L3.5 3.2 L6 0.8" fill="none" stroke="#555" stroke-width="1.2"/></svg>
<div class="t" style="left:355px;top:104.0px;height:21px;line-height:21px;font-size:15px;color:#444;text-align:left;font-weight:normal;width:16px;text-align:center">A</div>
<div style="left:355px;top:121px;width:16px;height:4px;background:#ff0000"></div>
<svg style="position:absolute;left:378px;top:115px;" width="7" height="4" viewBox="0 0 7 4"><path d="M1 0.8 L3.5 3.2 L6 0.8" fill="none" stroke="#555" stroke-width="1.2"/></svg>
<div class="t" style="left:250px;top:140.0px;width:44px;height:16px;line-height:16px;font-size:12px;color:#444;text-align:center;font-weight:normal;">Font</div>
<svg style="position:absolute;left:385px;top:144px;" width="9" height="9" viewBox="0 0 9 9"><path d="M0.5 8 V0.5 H8 M3 3 L8 8 M8 4.5 V8 H4.5" fill="none" stroke="#666" stroke-width="1"/></svg>
<div style="left:396px;top:68px;width:1px;height:84px;background:#c6c6c6"></div>
<svg style="position:absolute;left:409px;top:78px;" width="14" height="7" viewBox="0 0 14 7"><rect x="0" y="0" width="14" height="1" fill="#555"/><rect x="0" y="3" width="14" height="1" fill="#555"/><rect x="0" y="6" width="14" height="1" fill="#555"/></svg>
<div style="left:429px;top:75px;width:23px;height:24px;background:#c5c5c5;border:1px solid #9a9a9a"></div>
<svg style="position:absolute;left:433px;top:82px;" width="14" height="7" viewBox="0 0 14 7"><rect x="0" y="0" width="14" height="1" fill="#555"/><rect x="0" y="3" width="14" height="1" fill="#555"/><rect x="0" y="6" width="14" height="1" fill="#555"/></svg>
<svg style="position:absolute;left:457px;top:87px;" width="14" height="7" viewBox="0 0 14 7"><rect x="0" y="0" width="14" height="1" fill="#555"/><rect x="0" y="3" width="14" height="1" fill="#555"/><rect x="0" y="6" width="14" height="1" fill="#555"/></svg>
<div style="left:480px;top:76px;width:1px;height:22px;background:#d0d0d0"></div>
<svg style="position:absolute;left:486px;top:77px;" width="18" height="17" viewBox="0 0 18 17"><text x="1" y="11" font-size="10" font-family="Liberation Sans" fill="#555" transform="rotate(-40 6 8)">ab</text><path d="M4 16 L15 5 M12 4.5 L15.5 4.5 L15.5 8" fill="none" stroke="#555" stroke-width="1.1"/></svg>
<svg style="position:absolute;left:509px;top:84px;" width="7" height="4" viewBox="0 0 7 4"><path d="M1 0.8 L3.5 3.2 L6 0.8" fill="none" stroke="#555" stroke-width="1.2"/></svg>
<div style="left:535px;top:74px;width:1px;height:56px;background:#d0d0d0"></div>
<div style="left:539px;top:75px;width:81px;height:24px;background:#c5c5c5;border:1px solid #9a9a9a"></div>
<svg style="position:absolute;left:544px;top:79px;" width="14" height="16" viewBox="0 0 14 16"><text x="0" y="7" font-size="8.5" font-family="Liberation Sans" fill="#444">ab</text><text x="0" y="15" font-size="8.5" font-family="Liberation Sans" fill="#444">c</text><path d="M11 9 V12 H7 M8.5 10.5 L7 12 L8.5 13.5" fill="none" stroke="#3f7dc0" stroke-width="1"/></svg>
<div class="t" style="left:561px;top:79.0px;height:16px;line-height:16px;font-size:12px;color:#262626;text-align:left;font-weight:normal;">Wrap Text</div>
<svg style="position:absolute;left:409px;top:112px;" width="14" height="10" viewBox="0 0 14 10"><rect x="0" y="0" width="14" height="1" fill="#555"/><rect x="0" y="3" width="10" height="1" fill="#555"/><rect x="0" y="6" width="14" height="1" fill="#555"/><rect x="0" y="9" width="10" height="1" fill="#555"/></svg>
<div style="left:429px;top:106px;width:23px;height:24px;background:#c5c5c5;border:1px solid #9a9a9a"></div>
<svg style="position:absolute;left:433px;top:112px;" width="14" height="10" viewBox="0 0 14 10"><rect x="0" y="0" width="14" height="1" fill="#555"/><rect x="0" y="3" width="14" height="1" fill="#555"/><rect x="0" y="6" width="14" height="1" fill="#555"/><rect x="0" y="9" width="14" height="1" fill="#555"/></svg>
<svg style="position:absolute;left:457px;top:112px;" width="14" height="10" viewBox="0 0 14 10"><rect x="0" y="0" width="14" height="1" fill="#555"/><rect x="0" y="3" width="10" height="1" fill="#555"/><rect x="0" y="6" width="14" height="1" fill="#555"/><rect x="0" y="9" width="10" height="1" fill="#555"/></svg>
<svg style="position:absolute;left:457px;top:112px;background:#f3f3f3" width="14" height="10" viewBox="0 0 14 10"><rect x="0" y="0" width="14" height="1" fill="#555"/><rect x="4" y="3" width="10" height="1" fill="#555"/><rect x="0" y="6" width="14" height="1" fill="#555"/><rect x="4" y="9" width="10" height="1" fill="#555"/></svg>
<div style="left:480px;top:107px;width:1px;height:22px;background:#d0d0d0"></div>
<svg style="position:absolute;left:487px;top:110px;" width="17" height="14" viewBox="0 0 17 14"><path d="M0 0.5 H16 M7 4.5 H16 M7 8.5 H16 M0 12.5 H16" stroke="#555"/><path d="M5.5 6.5 H1 M3.5 4 L1 6.5 L3.5 9" fill="none" stroke="#3f7dc0" stroke-width="1.5"/></svg>
<svg style="position:absolute;left:511px;top:110px;" width="17" height="14" viewBox="0 0 17 14"><path d="M0 0.5 H16 M7 4.5 H16 M7 8.5 H16 M0 12.5 H16" stroke="#555"/><path d="M0 6.5 H4.5 M2.5 4 L5 6.5 L2.5 9" fill="none" stroke="#3f7dc0" stroke-width="1.5"/></svg>
<svg style="position:absolute;left:541px;top:108px;" width="17" height="17" viewBox="0 0 17 17"><rect x="0.5" y="0.5" width="15" height="15" fill="none" stroke="#c9b8c0"/><path d="M0.5 4.5 H15.5 M0.5 11.5 H15.5 M8 0.5 V4.5 M8 11.5 V15.5 M3 8 H13 M5 6 L3 8 L5 10 M11 6 L13 8 L11 10" fill="none" stroke="#c9b8c0"/></svg>
<div class="t" style="left:561px;top:110.0px;height:16px;line-height:16px;font-size:12px;color:#a6a6a6;text-align:left;font-weight:normal;">Merge &amp; Center</div>
<svg style="position:absolute;left:656px;top:116px;" width="7" height="4" viewBox="0 0 7 4"><path d="M1 0.8 L3.5 3.2 L6 0.8" fill="none" stroke="#aaa" stroke-width="1.2"/></svg>
<div class="t" style="left:497px;top:140.0px;width:64px;height:16px;line-height:16px;font-size:12px;color:#444;text-align:center;font-weight:normal;">Alignment</div>
<svg style="position:absolute;left:665px;top:144px;" width="9" height="9" viewBox="0 0 9 9"><path d="M0.5 8 V0.5 H8 M3 3 L8 8 M8 4.5 V8 H4.5" fill="none" stroke="#666" stroke-width="1"/></svg>
<div style="left:676px;top:68px;width:1px;height:84px;background:#c6c6c6"></div>
<div style="left:685px;top:75px;width:140px;height:24px;background:#fff;border:1px solid #ababab"></div>
<div class="t" style="left:689px;top:78.5px;height:17px;line-height:17px;font-size:12.5px;color:#262626;text-align:left;font-weight:normal;">General</div>
<svg style="position:absolute;left:814px;top:85px;" width="7" height="4" viewBox="0 0 7 4"><path d="M0 0 H7 L3.5 4 Z" fill="#444"/></svg>
<div class="t" style="left:691px;top:106.5px;height:21px;line-height:21px;font-size:15px;color:#555;text-align:left;font-weight:normal;">$</div>
<svg style="position:absolute;left:711px;top:116px;" width="7" height="4" viewBox="0 0 7 4"><path d="M1 0.8 L3.5 3.2 L6 0.8" fill="none" stroke="#555" stroke-width="1.2"/></svg>
<div class="t" style="left:728px;top:107.0px;height:20px;line-height:20px;font-size:14.5px;color:#555;text-align:left;font-weight:normal;">%</div>
<div class="t" style="left:755px;top:101.5px;height:21px;line-height:21px;font-size:15px;color:#555;text-align:left;font-weight:bold;">,</div>
<div style="left:774px;top:107px;width:1px;height:22px;background:#d0d0d0"></div>
<svg style="position:absolute;left:780px;top:109px;" width="18" height="15" viewBox="0 0 18 15"><text x="7" y="6.5" font-size="7.5" font-family="Liberation Sans" fill="#555">.0</text><text x="4" y="14" font-size="7.5" font-family="Liberation Sans" fill="#555">.00</text><path d="M7 3.5 H1 M3 1.5 L1 3.5 L3 5.5" fill="none" stroke="#3f7dc0" stroke-width="1.1"/></svg>
<svg style="position:absolute;left:805px;top:109px;" width="18" height="15" viewBox="0 0 18 15"><text x="5" y="6.5" font-size="7.5" font-family="Liberation Sans" fill="#555">.00</text><text x="8" y="14" font-size="7.5" font-family="Liberation Sans" fill="#555">.0</text><path d="M1 11.5 H7 M5 9.5 L7 11.5 L5 13.5" fill="none" stroke="#3f7dc0" stroke-width="1.1"/></svg>
<div class="t" style="left:724px;top:140.0px;width:44px;height:16px;line-height:16px;font-size:12px;color:#444;text-align:center;font-weight:normal;">Number</div>
<svg style="position:absolute;left:821px;top:144px;" width="9" height="9" viewBox="0 0 9 9"><path d="M0.5 8 V0.5 H8 M3 3 L8 8 M8 4.5 V8 H4.5" fill="none" stroke="#666" stroke-width="1"/></svg>
<div style="left:832px;top:68px;width:1px;height:84px;background:#c6c6c6"></div>
<svg style="position:absolute;left:863px;top:71px;" width="33" height="33" viewBox="0 0 33 33"><rect x="0.5" y="0.5" width="28" height="25" fill="#fff" stroke="#8a8a8a"/><path d="M0.5 6.5 H28.5 M0.5 12.5 H28.5 M0.5 18.5 H28.5 M7.5 0.5 V25.5 M14.5 0.5 V25.5 M21.5 0.5 V25.5" stroke="#8a8a8a"/><rect x="8" y="1" width="6" height="5" fill="#e0613b"/><rect x="8" y="7" width="13" height="5" fill="#3f7dc0"/><rect x="8" y="13" width="10" height="5" fill="#e0613b"/><rect x="8" y="19" width="6" height="6" fill="#3f7dc0"/><rect x="14.5" y="17.5" width="17" height="14" fill="#fff" stroke="#666"/><text x="18" y="29" font-size="13" font-family="Liberation Sans" fill="#444">≠</text></svg>
<div class="t" style="left:838px;top:105.0px;width:80px;height:16px;line-height:16px;font-size:12px;color:#262626;text-align:center;font-weight:normal;">Conditional</div>
<div class="t" style="left:838px;top:120.0px;width:74px;height:16px;line-height:16px;font-size:12px;color:#262626;text-align:center;font-weight:normal;">Formatting</div>
<svg style="position:absolute;left:906px;top:126px;" width="7" height="4" viewBox="0 0 7 4"><path d="M1 0.8 L3.5 3.2 L6 0.8" fill="none" stroke="#555" stroke-width="1.2"/></svg>
<svg style="position:absolute;left:930px;top:73px;" width="32" height="31" viewBox="0 0 32 31"><rect x="0.5" y="0.5" width="25" height="21" fill="#fff" stroke="#8a8a8a"/><rect x="7" y="6" width="18" height="15" fill="#c5d9ee"/><path d="M0.5 5.5 H25.5 M0.5 10.5 H25.5 M0.5 15.5 H25.5 M6.5 0.5 V21.5 M12.5 0.5 V21.5 M18.5 0.5 V21.5" stroke="#8a8a8a"/><path d="M30 6 L31.5 7.5 L22 19 L19.5 17 Z" fill="#7a7a7a"/><path d="M19 17.5 L22 20 C21 24 17 27.5 11 29 C13 25 15 19.5 19 17.5 Z" fill="#3f7dc0"/></svg>
<div class="t" style="left:904px;top:105.0px;width:80px;height:16px;line-height:16px;font-size:12px;color:#262626;text-align:center;font-weight:normal;">Format as</div>
<div class="t" style="left:904px;top:120.0px;width:70px;height:16px;line-height:16px;font-size:12px;color:#262626;text-align:center;font-weight:normal;">Table</div>
<svg style="position:absolute;left:955px;top:126px;" width="7" height="4" viewBox="0 0 7 4"><path d="M1 0.8 L3.5 3.2 L6 0.8" fill="none" stroke="#555" stroke-width="1.2"/></svg>
<div style="left:974px;top:70px;width:548px;height:62px;background:#fff;border:1px solid #c6c6c6"></div>
<div class="t" style="left:982px;top:77.5px;height:18px;line-height:18px;font-size:13px;color:#000;text-align:left;font-weight:normal;">Comma 2</div>
<div class="t" style="left:1088px;top:77.5px;height:18px;line-height:18px;font-size:13px;color:#000;text-align:left;font-weight:normal;">Comma 3</div>
<div class="t" style="left:1194px;top:77.5px;height:18px;line-height:18px;font-size:13px;color:#000;text-align:left;font-weight:normal;">Normal 2</div>
<div class="t" style="left:1300px;top:77.5px;height:18px;line-height:18px;font-size:13px;color:#000;text-align:left;font-weight:normal;">Normal 2 2</div>
<div class="t" style="left:1406px;top:77.5px;height:18px;line-height:18px;font-size:13px;color:#000;text-align:left;font-weight:normal;">Normal 3</div>
<div class="t" style="left:982px;top:105.0px;height:18px;line-height:18px;font-size:13px;color:#000;text-align:left;font-weight:normal;">Normal 4</div>
<div class="t" style="left:1088px;top:105.0px;height:18px;line-height:18px;font-size:13px;color:#000;text-align:left;font-weight:normal;">Percent 2</div>
<div class="t" style="left:1194px;top:105.0px;height:18px;line-height:18px;font-size:13px;color:#000;text-align:left;font-weight:normal;">Percent 3</div>
<div style="left:1293px;top:101px;width:106px;height:28px;background:#fff;border:2px solid #8c8c8c;box-shadow:inset 0 0 0 1px #d9d9d9"></div>
<div class="t" style="left:1300px;top:105.0px;height:18px;line-height:18px;font-size:13px;color:#000;text-align:left;font-weight:normal;">Normal</div>
<div style="left:1402px;top:104px;width:100px;height:22px;background:#ffc7ce"></div>
<div class="t" style="left:1406px;top:105.0px;height:18px;line-height:18px;font-size:13px;color:#9c0006;text-align:left;font-weight:normal;">Bad</div>
<div style="left:1506px;top:70px;width:16px;height:62px;background:#fff;border:1px solid #c6c6c6"></div>
<div style="left:1507px;top:71px;width:14px;height:20px;background:#e3e3e3"></div>
<div style="left:1507px;top:91px;width:14px;height:1px;background:#c6c6c6"></div>
<div style="left:1507px;top:110px;width:14px;height:1px;background:#c6c6c6"></div>
<svg style="position:absolute;left:1510px;top:79px;" width="8" height="4" viewBox="0 0 8 4"><path d="M0 4 L4 0 L8 4 Z" fill="#c4c4c4"/></svg>
<svg style="position:absolute;left:1510px;top:99px;" width="8" height="4" viewBox="0 0 8 4"><path d="M0 0 H8 L4 4 Z" fill="#555"/></svg>
<svg style="position:absolute;left:1510px;top:117px;" width="8" height="8" viewBox="0 0 8 8"><rect x="0" y="0" width="8" height="1.2" fill="#555"/><path d="M0 3.5 H8 L4 7.5 Z" fill="#555"/></svg>
<div class="t" style="left:1151px;top:140.0px;width:60px;height:16px;line-height:16px;font-size:12px;color:#444;text-align:center;font-weight:normal;">Styles</div>
<div style="left:1531px;top:68px;width:1px;height:84px;background:#c6c6c6"></div>
<svg style="position:absolute;left:1547px;top:71px;" width="28" height="29" viewBox="0 0 28 29"><rect x="1.5" y="1.5" width="14" height="5" fill="#fff" stroke="#777"/><path d="M8.5 1.5 V6.5" stroke="#777"/><rect x="11.5" y="9.5" width="15" height="5" fill="#c5d9ee" stroke="#777"/><path d="M19 9.5 V14.5" stroke="#777"/><path d="M9 12 H2 M4.5 9.5 L2 12 L4.5 14.5" fill="none" stroke="#3f7dc0" stroke-width="1.6"/><rect x="1.5" y="17.5" width="14" height="10" fill="#fff" stroke="#777"/><path d="M8.5 17.5 V27.5 M1.5 22.5 H15.5" stroke="#777"/></svg>
<div class="t" style="left:1530px;top:105.0px;width:60px;height:16px;line-height:16px;font-size:12px;color:#262626;text-align:center;font-weight:normal;">Insert</div>
<svg style="position:absolute;left:1557px;top:126px;" width="7" height="4" viewBox="0 0 7 4"><path d="M1 0.8 L3.5 3.2 L6 0.8" fill="none" stroke="#555" stroke-width="1.2"/></svg>
<svg style="position:absolute;left:1588px;top:71px;" width="31" height="29" viewBox="0 0 31 29"><rect x="1.5" y="1.5" width="14" height="5" fill="#fff" stroke="#777"/><path d="M8.5 1.5 V6.5" stroke="#777"/><rect x="6.5" y="9.5" width="12" height="5" fill="#c5d9ee" stroke="#777"/><path d="M12.5 9.5 V14.5" stroke="#777"/><rect x="1.5" y="17.5" width="14" height="10" fill="#fff" stroke="#777"/><path d="M8.5 17.5 V27.5 M1.5 22.5 H15.5" stroke="#777"/><path d="M15 7 L29 19 M28.5 6 L15 19" stroke="#e0613b" stroke-width="2"/></svg>
<div class="t" style="left:1573px;top:105.0px;width:60px;height:16px;line-height:16px;font-size:12px;color:#262626;text-align:center;font-weight:normal;">Delete</div>
<svg style="position:absolute;left:1600px;top:126px;" width="7" height="4" viewBox="0 0 7 4"><path d="M1 0.8 L3.5 3.2 L6 0.8" fill="none" stroke="#555" stroke-width="1.2"/></svg>
<svg style="position:absolute;left:1630px;top:70px;" width="30" height="33" viewBox="0 0 30 33"><path d="M1 3.5 H28 M1 1 V6 M28 1 V6 M4 1 L1 3.5 L4 6 M25 1 L28 3.5 L25 6" fill="none" stroke="#3f7dc0" stroke-width="1.1"/><rect x="1.5" y="9.5" width="27" height="19" fill="#fff" stroke="#888"/><path d="M1.5 14.5 H28.5 M1.5 24.5 H28.5 M8.5 9.5 V28.5 M16.5 9.5 V28.5 M23.5 9.5 V28.5" stroke="#888"/><rect x="9" y="14.5" width="7" height="10" fill="#3f7dc0"/><path d="M1.5 28.5 V32 H8 L11 29 M11 29 V32 H17 L20 29" fill="none" stroke="#888"/></svg>
<div class="t" style="left:1615px;top:105.0px;width:60px;height:16px;line-height:16px;font-size:12px;color:#262626;text-align:center;font-weight:normal;">Format</div>
<svg style="position:absolute;left:1641px;top:126px;" width="7" height="4" viewBox="0 0 7 4"><path d="M1 0.8 L3.5 3.2 L6 0.8" fill="none" stroke="#555" stroke-width="1.2"/></svg>
<div class="t" style="left:1573px;top:140.0px;width:60px;height:16px;line-height:16px;font-size:12px;color:#444;text-align:center;font-weight:normal;">Cells</div>
<div style="left:1675px;top:68px;width:1px;height:84px;background:#c6c6c6"></div>
<svg style="position:absolute;left:1685px;top:69px;" width="17" height="17" viewBox="0 0 17 17"><path d="M15.5 3.5 V1.5 H1.5 L8 8.5 L1.5 15.5 H15.5 V13.5" fill="none" stroke="#444" stroke-width="2.2"/></svg>
<div class="t" style="left:1705px;top:71.0px;height:16px;line-height:16px;font-size:12px;color:#262626;text-align:left;font-weight:normal;">AutoSum</div>
<svg style="position:absolute;left:1766px;top:76px;" width="7" height="4" viewBox="0 0 7 4"><path d="M1 0.8 L3.5 3.2 L6 0.8" fill="none" stroke="#555" stroke-width="1.2"/></svg>
<svg style="position:absolute;left:1686px;top:92px;" width="16" height="18" viewBox="0 0 16 18"><rect x="0.5" y="0.5" width="14" height="16" fill="#fff" stroke="#777"/><rect x="0.5" y="0.5" width="14" height="3" fill="#777"/><path d="M7.5 6 V13.5 M4.5 10.5 L7.5 13.5 L10.5 10.5" fill="none" stroke="#3f7dc0" stroke-width="1.6"/></svg>
<div class="t" style="left:1705px;top:93.0px;height:16px;line-height:16px;font-size:12px;color:#262626;text-align:left;font-weight:normal;">Fill</div>
<svg style="position:absolute;left:1726px;top:99px;" width="7" height="4" viewBox="0 0 7 4"><path d="M1 0.8 L3.5 3.2 L6 0.8" fill="none" stroke="#555" stroke-width="1.2"/></svg>
<svg style="position:absolute;left:1686px;top:116px;" width="15" height="14" viewBox="0 0 15 14"><path d="M9 0.5 L14 5.5 L6 13.5 L1 8.5 Z" fill="#e67e97"/><path d="M3.5 6 L8.5 11" stroke="#f3f3f3" stroke-width="1"/></svg>
<div class="t" style="left:1705px;top:116.0px;height:16px;line-height:16px;font-size:12px;color:#262626;text-align:left;font-weight:normal;">Clear</div>
<svg style="position:absolute;left:1737px;top:122px;" width="7" height="4" viewBox="0 0 7 4"><path d="M1 0.8 L3.5 3.2 L6 0.8" fill="none" stroke="#555" stroke-width="1.2"/></svg>
<svg style="position:absolute;left:1783px;top:72px;" width="31" height="28" viewBox="0 0 31 28"><text x="0.3" y="12.8" font-size="16" font-weight="bold" font-family="Liberation Sans" fill="#3f7dc0">A</text><text x="1.5" y="26.9" font-size="16" font-family="Liberation Sans" fill="#8e56c0" stroke="#8e56c0" stroke-width="0.5">Z</text><path d="M13 7 H29 L23.5 13 V22 L19.5 22 V13 Z" fill="#777"/><path d="M20.5 13 V21" stroke="#f3f3f3" stroke-width="1"/></svg>
<div class="t" style="left:1769px;top:105.0px;width:60px;height:16px;line-height:16px;font-size:12px;color:#262626;text-align:center;font-weight:normal;">Sort &amp;</div>
<div class="t" style="left:1764px;top:120.0px;width:60px;height:16px;line-height:16px;font-size:12px;color:#262626;text-align:center;font-weight:normal;">Filter</div>
<svg style="position:absolute;left:1811px;top:126px;" width="7" height="4" viewBox="0 0 7 4"><path d="M1 0.8 L3.5 3.2 L6 0.8" fill="none" stroke="#555" stroke-width="1.2"/></svg>
<svg style="position:absolute;left:1828px;top:71px;" width="29" height="29" viewBox="0 0 29 29"><circle cx="18" cy="10.7" r="8.6" fill="#fff" stroke="#3f7dc0" stroke-width="2"/><path d="M11.8 17.8 L4 26" stroke="#3f7dc0" stroke-width="3.6" stroke-linecap="round"/></svg>
<div class="t" style="left:1812px;top:105.0px;width:60px;height:16px;line-height:16px;font-size:12px;color:#262626;text-align:center;font-weight:normal;">Find &amp;</div>
<div class="t" style="left:1809px;top:120.0px;width:60px;height:16px;line-height:16px;font-size:12px;color:#262626;text-align:center;font-weight:normal;">Select</div>
<svg style="position:absolute;left:1857px;top:126px;" width="7" height="4" viewBox="0 0 7 4"><path d="M1 0.8 L3.5 3.2 L6 0.8" fill="none" stroke="#555" stroke-width="1.2"/></svg>
<div class="t" style="left:1744px;top:140.0px;width:60px;height:16px;line-height:16px;font-size:12px;color:#444;text-align:center;font-weight:normal;">Editing</div>
<div style="left:1875px;top:68px;width:1px;height:84px;background:#c6c6c6"></div>
<svg style="position:absolute;left:1901px;top:146px;" width="12" height="7" viewBox="0 0 12 7"><path d="M0.5 6.5 L6 1 L11.5 6.5" fill="none" stroke="#555" stroke-width="1.1"/></svg>
<svg style="position:absolute;left:93px;top:179px;" width="7" height="4" viewBox="0 0 7 4"><path d="M0 0 H7 L3.5 4 Z" fill="#666"/></svg>
<div style="left:121px;top:175px;width:2px;height:2px;background:#9a9a9a"></div>
<div style="left:121px;top:179px;width:2px;height:2px;background:#9a9a9a"></div>
<div style="left:121px;top:183px;width:2px;height:2px;background:#9a9a9a"></div>
<svg style="position:absolute;left:150px;top:174px;" width="12" height="12" viewBox="0 0 12 12"><path d="M1 1 L11 11 M11 1 L1 11" stroke="#a8a8a8" stroke-width="1.3"/></svg>
<svg style="position:absolute;left:185px;top:174px;" width="14" height="12" viewBox="0 0 14 12"><path d="M1 6 L5 10.5 L13 1.5" fill="none" stroke="#b5b5b5" stroke-width="2"/></svg>
<div class="t" style="left:221px;top:170.0px;height:19px;line-height:19px;font-size:14px;color:#555;text-align:left;font-weight:normal;font-family:"Liberation Serif",serif;font-weight:bold"><i>f</i><span style="font-size:9px;font-style:italic">x</span></div>
<svg style="position:absolute;left:1902px;top:175px;" width="9" height="6" viewBox="0 0 9 6"><path d="M0.8 5 L4.5 1.3 L8.2 5" fill="none" stroke="#555" stroke-width="1.5"/></svg>
<svg style="position:absolute;left:1638px;top:1021px;" width="15" height="15" viewBox="0 0 15 15"><rect x="0.5" y="0.5" width="13" height="13" fill="none" stroke="#555"/><path d="M0.5 5 H13.5 M0.5 9.5 H13.5 M5 0.5 V13.5 M9.5 0.5 V13.5" stroke="#555"/></svg>
<svg style="position:absolute;left:1678px;top:1021px;" width="16" height="15" viewBox="0 0 16 15"><rect x="0.5" y="0.5" width="14" height="13" fill="none" stroke="#555"/><rect x="3.5" y="3" width="8" height="8" fill="none" stroke="#555"/><path d="M5 5.5 H10 M5 7.5 H10" stroke="#555"/></svg>
<svg style="position:absolute;left:1718px;top:1021px;" width="16" height="15" viewBox="0 0 16 15"><rect x="0.5" y="0.5" width="14" height="13" fill="none" stroke="#555"/><path d="M0.5 6.5 H7.5 V0.5 M5 0.5 V6.5" fill="none" stroke="#555"/></svg>
</body></html>
